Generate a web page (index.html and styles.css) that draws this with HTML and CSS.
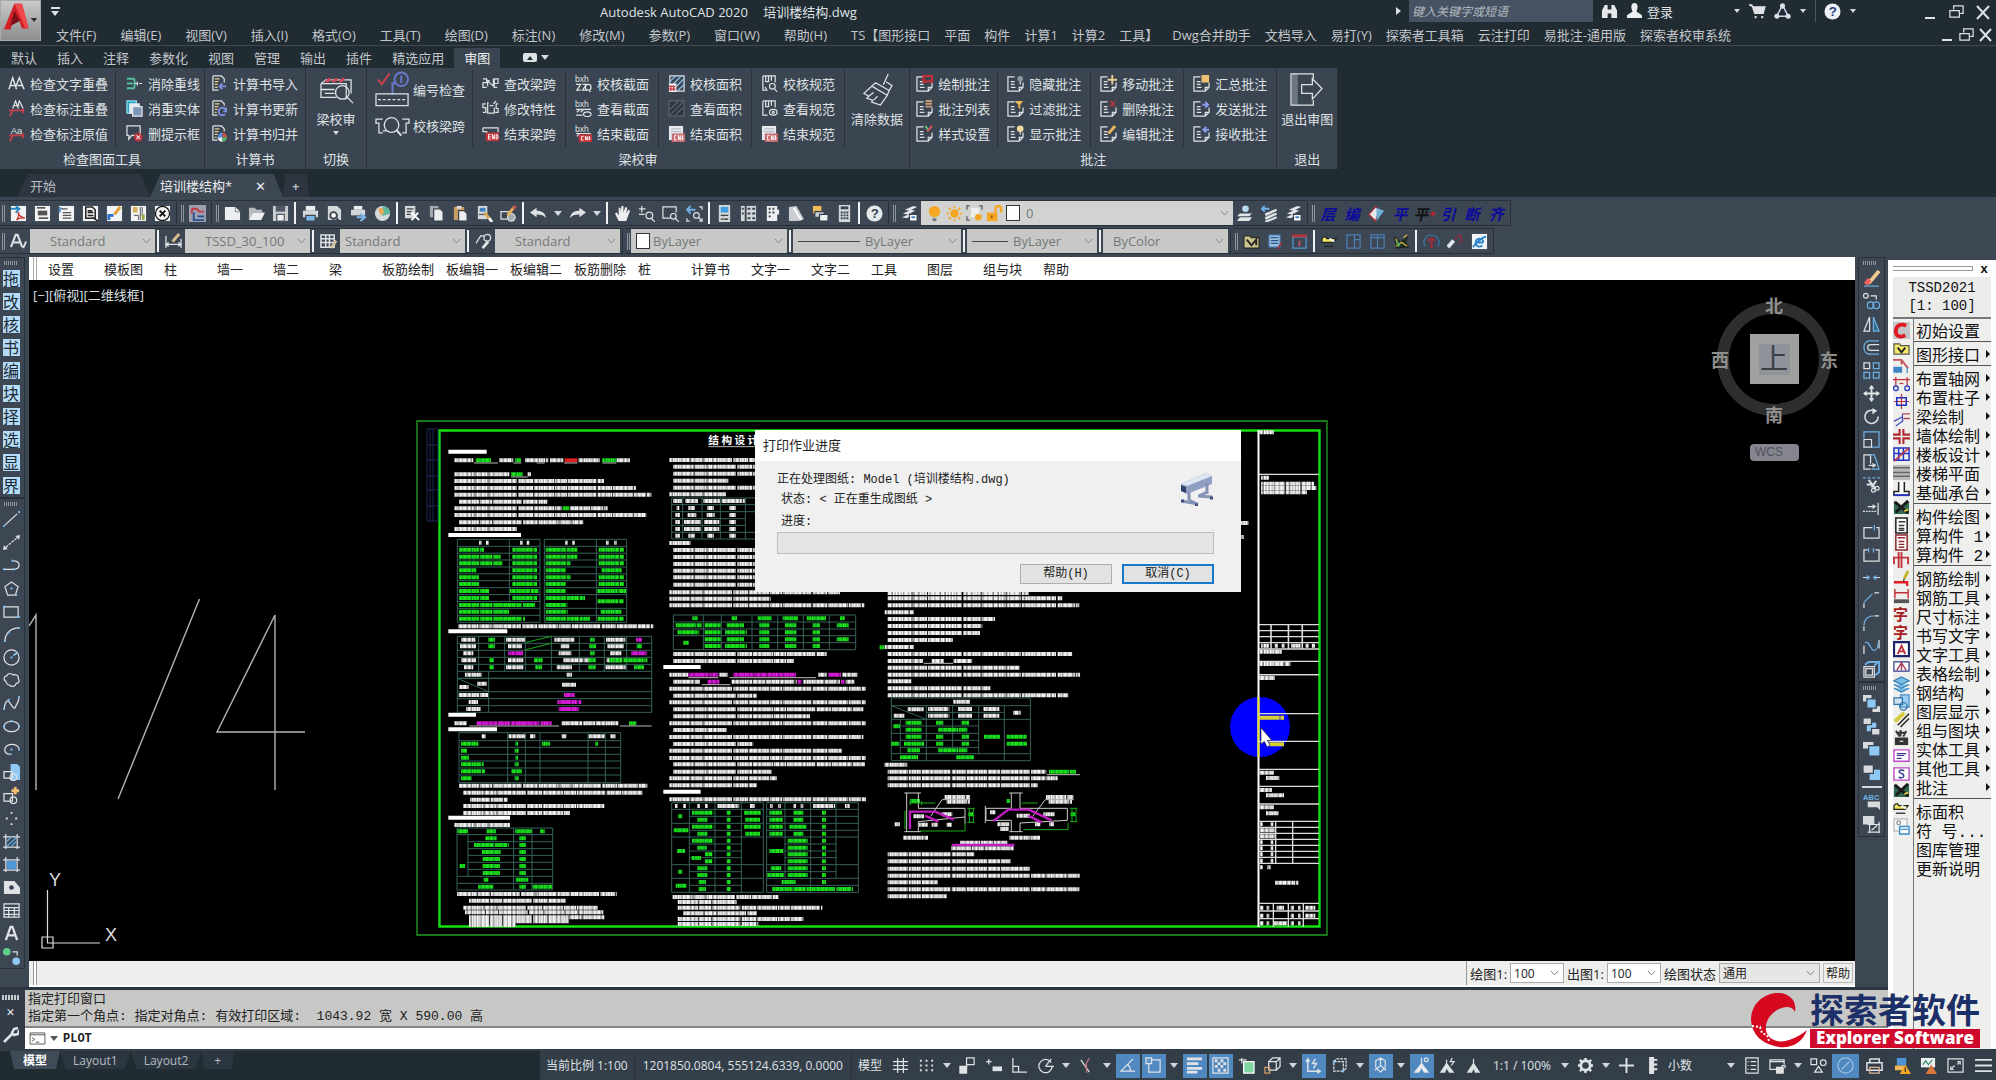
FILE: index.html
```
<!DOCTYPE html>
<html lang="zh-CN">
  <head>
    <meta charset="UTF-8" />
    <meta name="viewport" content="width=device-width, initial-scale=1.0" />
    <title>Autodesk AutoCAD 2020 培训楼结构.dwg</title>
    <link rel="stylesheet" href="styles.css">
  </head>
  <body>
    <!-- icon sprite -->
    <svg class="sprite">
      <symbol id="aa" viewBox="0 0 18 18"><path d="M1 15L5 3l4 12M3 11h5M8 13L12 3l5 12M10 11h5" stroke-width="1.6"/></symbol>
      <symbol id="aadim" viewBox="0 0 18 18"><path d="M5 9l3-8 3 8M7 6h5M10 8l2-7 4 8"/><path d="M1 11h16M2 17l3-6M16 9v5" stroke="#c0404c" stroke-width="2"/></symbol>
      <symbol id="aaval" viewBox="0 0 18 18"><text x="3" y="9" font-size="10">Aa</text><path d="M1 11h16M2 17l3-6M16 9v5" stroke="#c0404c" stroke-width="2"/></symbol>
      <symbol id="lines" viewBox="0 0 18 18"><path d="M1 4h8M1 9h6M1 14h8M9 4v10" stroke="#4fc1a0" stroke-width="2"/><path d="M9 9h3M14 9h3M12 7v4"/></symbol>
      <symbol id="solid" viewBox="0 0 18 18"><path d="M1 1h10v13H1z" fill="#2aa5c0" stroke="#8fe0ee"/><path d="M4 4h10v10H4z" fill="#e8edf2"/><path d="M7 7h10v10H7z" fill="#7f97b5" stroke="#dfe6ee"/></symbol>
      <symbol id="tip" viewBox="0 0 18 18"><path d="M1 1h14v10H6l-3 4v-4H1z"/><circle cx="13" cy="13" r="4.5" fill="#c22f37" stroke="none"/><path d="M11 11l4 4M15 11l-4 4"/></symbol>
      <symbol id="book-in" viewBox="0 0 18 18"><path d="M2 1h9l3 3v4M2 1v15h6"/><path d="M4 4h5M4 7h4M4 10h3M4 13h3" stroke="#e8d090"/><path d="M16 12h-6M12 9l-3 3 3 3" stroke="#7e8fe0" stroke-width="2"/></symbol>
      <symbol id="book-up" viewBox="0 0 18 18"><path d="M2 1h9l3 3v2M2 1v15h5"/><path d="M4 4h5M4 7h4M4 10h3M4 13h2" stroke="#e8d090"/><path d="M16 11a4 4 0 1 0-1 4M16 8v4h-3" stroke="#7e8fe0" stroke-width="2"/></symbol>
      <symbol id="book-m" viewBox="0 0 18 18"><path d="M2 1h9l3 3v3M2 1v15h5"/><path d="M4 4h5M4 7h4M4 10h3M4 13h2" stroke="#e8d090"/><g stroke="none"><path d="M12 13V8a5 5 0 0 1 5 5z" fill="#d35050"/><path d="M12 13h5a5 5 0 0 1-5 5z" fill="#52b36a"/><path d="M12 13v5a5 5 0 0 1-5-5z" fill="#e8eef5"/><path d="M12 13H7a5 5 0 0 1 5-5z" fill="#4e8fe0"/></g></symbol>
      <symbol id="beam-switch" viewBox="0 0 36 28"><path d="M2 8h26v16M2 8v14h16M2 14h14M6 18h10M2 8l5-4h26v14" /><path d="M7 6l5-3M14 6l5-3M21 6l5-3" stroke="#d04a5c" stroke-width="3"/><circle cx="24" cy="17" r="7"/><path d="M29 22l6 6"/></symbol>
      <symbol id="beam-no" viewBox="0 0 36 36"><path d="M3 8l4 5L15 2" stroke="#c8414a" stroke-width="2"/><circle cx="27" cy="8" r="7" stroke="#6878c8" stroke-width="2"/><path d="M27 4v8M18 24V12h3" stroke="#6878c8" stroke-width="2"/><path d="M1 23h33v12H1z"/><path d="M3 29h29" stroke-dasharray="3 2"/></symbol>
      <symbol id="beam-chk" viewBox="0 0 36 22"><path d="M8 4H1v4h3v10h4M28 4h7v4h-3v10h-4M8 16h4"/><circle cx="17" cy="10" r="7.500"/><path d="M22 15l5 6" stroke-width="2"/></symbol>
      <symbol id="span" viewBox="0 0 18 18"><path d="M1 4h4v4H1v5h4M16 13h-3V4h4v5h-4M6 6l6 6M6 12V6h2M12 4v8"/></symbol>
      <symbol id="span2" viewBox="0 0 18 18"><path d="M4 4H1v4h3v5H1M7 3H6v11h7V8M8 6h4M12 4l3-3M17 4h-2v5h2v4h-3"/></symbol>
      <symbol id="span-end" viewBox="0 0 18 18"><path d="M1 3h16v5M1 3v4h4v6"/><path d="M4 8h14v9H4z" fill="#c5333b" stroke="none"/><path d="M7 10v5M7 10h2M7 12.500h2M7 15h2M11 15v-5l2 5v-5M15 10v5q2 0 2-2.500t-2-2.500" stroke="#fff" stroke-width="1"/></symbol>
      <symbol id="sec" viewBox="0 0 18 18"><text x="0" y="7" font-size="9">bxh</text><path d="M1 10h5l-4 6h4M8 10h4l-4 6h5M15 17l2 1"/><circle cx="14" cy="13" r="3"/></symbol>
      <symbol id="sec-eye" viewBox="0 0 18 18"><text x="0" y="7" font-size="9">bxh</text><path d="M1 10h16M2 13l3-3M6 13l3-3M1 16h7"/><ellipse cx="13" cy="15" rx="4" ry="2.500"/></symbol>
      <symbol id="sec-end" viewBox="0 0 18 18"><text x="0" y="7" font-size="9">bxh</text><path d="M1 9h16M2 12l3-3"/><path d="M4 10h14v8H4z" fill="#c5333b" stroke="none"/><path d="M7 12v4M7 12h2M7 16h2M11 16v-4l2 4v-4M15 12v4q2-1 0-4" stroke="#fff" stroke-width="1"/></symbol>
      <symbol id="area" viewBox="0 0 18 18"><path d="M2 1h15v16H2z"/><path d="M2 7l6-6M2 13L14 1M8 13l9-9M10 17l7-7" stroke="#89c4ec"/><path d="M1 9h8v9H1z" fill="#eee" stroke="none"/><path d="M3 11v6M6 11v6M1 12h7M1 15h7" stroke="#c5333b"/></symbol>
      <symbol id="area-v" viewBox="0 0 18 18"><path d="M1 1h16v16H1z" fill="#2e3641" stroke="#5a6470"/><path d="M2 10L11 1M2 16L16 2M8 16l8-8" stroke="#5a6470"/></symbol>
      <symbol id="doc-end" viewBox="0 0 18 18"><path d="M1 1h15v15H1z" fill="#e6e9ee" stroke="none"/><path d="M3 4h11M3 7h11" stroke="#b8bec8"/><path d="M4 9h14v9H4z" fill="#c96a6f" stroke="none"/><path d="M7 11v5M7 11h2M7 16h2M11 16v-5l2 5v-5M15 11v5q2-1 0-5" stroke="#fff" stroke-width="1"/></symbol>
      <symbol id="norm" viewBox="0 0 18 18"><path d="M2 1v15h5M2 1h13v7M5 1v6h3V1M11 1v5M4 13l2 2"/><circle cx="12" cy="12" r="3"/><path d="M14 14l3 4"/></symbol>
      <symbol id="norm-eye" viewBox="0 0 18 18"><path d="M2 1v15h5M2 1h13v7M5 1v6h3V1M11 1v5"/><ellipse cx="13" cy="13" rx="4" ry="3"/><circle cx="13" cy="13" r="1"/></symbol>
      <symbol id="broom" viewBox="0 0 34 34"><path d="M28 1l-5 11M15 10l14 8M12 14l15 9M15 10L3 21l5 3-2 2 6 2-1 2 9 3 7-10 2-5M29 18l3-5-6-4M8 24l5-4M13 28l4-4"/></symbol>
      <symbol id="note" viewBox="0 0 18 18"><path d="M8 2H1v15h12l4-4V8M13 17v-4h4M4 7h4M4 10h4M4 13h5"/></symbol>
      <symbol id="n-draw" viewBox="0 0 18 18"><use href="#note"/><path d="M8 1h9v6H8z" stroke="#c22f37" stroke-width="2.500"/></symbol>
      <symbol id="n-list" viewBox="0 0 18 18"><use href="#note"/><path d="M10 1h7M10 4h7M10 7h7" stroke="#c49a76" stroke-width="2"/></symbol>
      <symbol id="n-style" viewBox="0 0 18 18"><use href="#note"/><path d="M10 1l3 4" stroke="#69c37c" stroke-width="2"/><path d="M17 1l-5 6" stroke="#e05058" stroke-width="2"/></symbol>
      <symbol id="n-hide" viewBox="0 0 18 18"><use href="#note"/><circle cx="14" cy="4" r="3" fill="#8d97a0" stroke="none"/><path d="M14 7v3"/></symbol>
      <symbol id="n-filter" viewBox="0 0 18 18"><use href="#note"/><path d="M8 1h9l-3 4v5l-2-2V5z" fill="#e9b65a" stroke="none"/></symbol>
      <symbol id="n-show" viewBox="0 0 18 18"><use href="#note"/><circle cx="14" cy="4" r="3.500" fill="#f4dba0" stroke="none"/><path d="M14 7v3"/></symbol>
      <symbol id="n-move" viewBox="0 0 18 18"><use href="#note"/><path d="M13 0v10M8 5h10" stroke="#e9cf96" stroke-width="2"/></symbol>
      <symbol id="n-del" viewBox="0 0 18 18"><use href="#note"/><path d="M11 1l5 6M16 1l-5 6" stroke="#c22f37" stroke-width="1.600"/></symbol>
      <symbol id="n-edit" viewBox="0 0 18 18"><use href="#note"/><path d="M16 1l-7 8" stroke="#e9b65a" stroke-width="3"/></symbol>
      <symbol id="n-sum" viewBox="0 0 18 18"><use href="#note"/><path d="M9 0h8v8H9z" fill="#ecc070" stroke="none"/></symbol>
      <symbol id="n-send" viewBox="0 0 18 18"><use href="#note"/><path d="M10 5h6M13 2l3 3-3 3" stroke="#8a9cf0" stroke-width="2"/></symbol>
      <symbol id="n-recv" viewBox="0 0 18 18"><use href="#note"/><path d="M17 5h-6M14 2l-3 3 3 3" stroke="#8a9cf0" stroke-width="2"/></symbol>
      <symbol id="exit" viewBox="0 0 36 34"><path d="M2 1h6v32H2z" fill="#6b7685" stroke="none"/><path d="M24 6V1H1v32h23v-5M12 12h11V6l10 10-10 11v-6H12z"/></symbol>

      <symbol id="sheet" viewBox="0 0 18 18"><path d="M1 1h16v16H1z" fill="#f2f3f4" stroke="none"/></symbol>
      <symbol id="pdf" viewBox="0 0 18 18"><use href="#sheet"/><path d="M1 4h8M6 1l4 3-4 4" stroke="#2a86c4" stroke-width="2"/><path d="M7 16c2-3 3-7 2-8s-1 4 7 6c-4-1-7 0-9 2" stroke="#d03030"/></symbol>
      <symbol id="plot1" viewBox="0 0 18 18"><use href="#sheet"/><path d="M3 3h9M5 14h10" stroke="#222"/><path d="M4 6h10v5H4z" fill="#555" stroke="none"/></symbol>
      <symbol id="plot2" viewBox="0 0 18 18"><use href="#sheet"/><path d="M3 4h7M5 8h9M5 11h9M5 14h9" stroke="#555"/><path d="M2 2v6" stroke="#4d93d0" stroke-width="2"/></symbol>
      <symbol id="plot3" viewBox="0 0 18 18"><use href="#sheet"/><path d="M4 2h7l3 3v9H4zM6 6h5M6 8h6M6 11h6M11 13l6 4" stroke="#222" stroke-width="1.600"/></symbol>
      <symbol id="plot4" viewBox="0 0 18 18"><use href="#sheet"/><path d="M3 16v-5h5" stroke="#2a6fc4" stroke-width="3"/><path d="M15 2L9 10" stroke="#e0a030" stroke-width="3"/></symbol>
      <symbol id="plot5" viewBox="0 0 18 18"><use href="#sheet"/><path d="M3 2h5v6H3z" fill="#d9b35a" stroke="none"/><path d="M11 2v14M13 2v10M4 11h5v5" stroke="#777"/><path d="M14 10v6" stroke="#9a4" stroke-width="3"/></symbol>
      <symbol id="xcirc" viewBox="0 0 18 18"><use href="#sheet"/><circle cx="9" cy="9" r="7.500" stroke="#111"/><path d="M6 6l6 6M12 6l-6 6" stroke="#111" stroke-width="2"/></symbol>
      <symbol id="tree" viewBox="0 0 18 18"><path d="M0 0h18v18H0z" fill="#9d9fae" stroke="none"/><path d="M3 4h5l3 3h5M3 4v5" stroke="#c63540" stroke-width="2"/><path d="M5 8v8h4M9 12h7M9 16h7" stroke="#23528f" stroke-width="2"/></symbol>
      <symbol id="new" viewBox="0 0 18 18"><path d="M1 2h11l5 5v9H1z" fill="#eceeef" stroke="none"/><path d="M12 2v5h5" stroke="#999"/></symbol>
      <symbol id="open" viewBox="0 0 18 18"><path d="M1 16V3h6l2 2h6v3H5z" fill="#b7bcc0" stroke="none"/><path d="M5 8h13l-4 8H1z" fill="#eceeef" stroke="none"/></symbol>
      <symbol id="save" viewBox="0 0 18 18"><path d="M1 1h16v16H1z" fill="#c9cdd1" stroke="none"/><path d="M4 1h10v6H4z" fill="#50596a" stroke="none"/><path d="M5 10h8v7H5z" fill="#eee" stroke="#50596a"/></symbol>
      <symbol id="print" viewBox="0 0 18 18"><path d="M4 1h10v5H4z" fill="#eceeef" stroke="none"/><path d="M1 6h16v7H1z" fill="#d4d7da" stroke="none"/><path d="M4 11h10v6H4z" fill="#7bb8e8" stroke="#39434f"/></symbol>
      <symbol id="preview" viewBox="0 0 18 18"><path d="M2 1h10l4 4v11H2z" fill="#d4d7da" stroke="none"/><circle cx="8" cy="11" r="3.500" stroke="#39434f" stroke-width="2" fill="#fff"/><path d="M11 14l4 4" stroke="#39434f" stroke-width="2"/></symbol>
      <symbol id="publish" viewBox="0 0 18 18"><path d="M4 1h9v4H4z" fill="#eceeef" stroke="none"/><path d="M1 5h15v6H1z" fill="#d4d7da" stroke="none"/><path d="M7 13h7M11 9l5 4-5 4" stroke="#7bb8e8" stroke-width="2"/></symbol>
      <symbol id="globe" viewBox="0 0 18 18"><circle cx="9" cy="9" r="8" fill="#d6d9dc" stroke="none"/><path d="M9 1a8 8 0 0 1 8 8l-8 3z" fill="#5fb89b" stroke="none"/><path d="M4 4l5-1 2 5-4 3z" fill="#e8a95c" stroke="none"/></symbol>
      <symbol id="cut" viewBox="0 0 18 18"><path d="M1 1h11v13H1z" fill="#d4d7da" stroke="none"/><path d="M3 4h7M3 7h5M3 10h4" stroke="#444"/><path d="M8 8l8 8M15 8l-7 8" stroke="#fff" stroke-width="2"/></symbol>
      <symbol id="copyd" viewBox="0 0 18 18"><path d="M2 1h9v12H2z" fill="#a5abb1" stroke="none"/><path d="M6 4h7l3 3v10H6z" fill="#eceeef" stroke="#39434f"/></symbol>
      <symbol id="paste" viewBox="0 0 18 18"><path d="M2 2h11v14H2z" fill="#c89b5e" stroke="none"/><path d="M5 1h5v3H5z" fill="#ddd" stroke="none"/><path d="M7 6h6l3 3v8H7z" fill="#eceeef" stroke="#39434f"/></symbol>
      <symbol id="match" viewBox="0 0 18 18"><path d="M2 1h10v14H2z" fill="#d4d7da" stroke="none"/><path d="M4 3h6v4H4z" fill="#3f7fc0" stroke="none"/><path d="M3 10h8" stroke="#555"/><path d="M9 8l5 6" stroke="#d9a95a" stroke-width="3"/><path d="M14 14l3 4" stroke="#fff" stroke-width="3"/></symbol>
      <symbol id="bedit" viewBox="0 0 18 18"><path d="M1 7h9v8H1z"/><circle cx="12" cy="13" r="4" fill="#a5abb1"/><path d="M15 2L8 11" stroke="#e2b05a" stroke-width="3"/><path d="M17 1l-3 3" stroke="#c2504f" stroke-width="3"/></symbol>
      <symbol id="undo" viewBox="0 0 18 18"><path d="M0 8l7-5v3c6 0 9 2 10 8-2-3-5-4-10-4v3z" fill="#dfe2e5" stroke="none"/></symbol>
      <symbol id="redo" viewBox="0 0 18 18"><path d="M18 8l-7-5v3C5 6 2 8 1 14c2-3 5-4 10-4v3z" fill="#dfe2e5" stroke="none"/></symbol>
      <symbol id="hand" viewBox="0 0 18 18"><path d="M5 17L1 9l2-1 2 3V3h2v5l1-7h2v7l2-6 2 1-1 6 2-4 2 1-3 8-1 3z" fill="#eceeef" stroke="none"/></symbol>
      <symbol id="zpm" viewBox="0 0 18 18"><path d="M1 4h7M4 1v7M1 10h6"/><circle cx="12" cy="11" r="3.500"/><path d="M14 14l4 4"/></symbol>
      <symbol id="zwin" viewBox="0 0 18 18"><path d="M9 14H1V2h14v6"/><circle cx="12" cy="12" r="3"/><path d="M14 14l4 4"/></symbol>
      <symbol id="zprev" viewBox="0 0 18 18"><path d="M1 14v3h3M14 17h3v-3M17 5V2h-3"/><path d="M1 5h9M5 1L1 5l4 4" stroke="#6db1e6" stroke-width="2"/><circle cx="11" cy="11" r="3"/><path d="M13 13l4 4"/></symbol>
      <symbol id="props" viewBox="0 0 18 18"><path d="M3 0h12v18H3z" fill="#d4d7da" stroke="none"/><path d="M5 2h8v6H5z" fill="#3f9fe0" stroke="none"/><path d="M5 11h8M5 15h8M8 10v2M11 14v2" stroke="#444"/></symbol>
      <symbol id="dcenter" viewBox="0 0 18 18"><path d="M1 1h16v16H1z" fill="#d4d7da" stroke="none"/><path d="M6 1v16M8 4h3M13 4h3M8 9h3M13 9h3M8 14h3M13 14h3M2 4h2M2 9h2" stroke="#39434f" stroke-width="2"/></symbol>
      <symbol id="tpal" viewBox="0 0 18 18"><path d="M3 1h11v4h2v5h-2v7H3z" fill="#eceeef" stroke="none"/><path d="M5 4h2M9 4h2M5 8h2M9 8h2M5 12h2" stroke="#39434f" stroke-width="2"/></symbol>
      <symbol id="sset" viewBox="0 0 18 18"><path d="M1 2l8-1 8 14-6 2H1z" fill="#c9cdd1" stroke="none"/><path d="M6 3l8 13" stroke="#fff" stroke-width="2"/></symbol>
      <symbol id="markup" viewBox="0 0 18 18"><path d="M1 1h9v8H1z" fill="#f0b95a" stroke="none"/><path d="M3 7h10v6H3z" fill="#cfd3d7" stroke="#39434f"/><path d="M8 10h9v7H8z" fill="#eceeef" stroke="#39434f"/></symbol>
      <symbol id="calc" viewBox="0 0 18 18"><path d="M3 0h12v18H3z" fill="#d4d7da" stroke="none"/><path d="M5 3h8" stroke="#39434f" stroke-width="3"/><path d="M5 8h8M5 11h8M5 14h8" stroke="#39434f" stroke-width="2" stroke-dasharray="2 1"/></symbol>
      <symbol id="help" viewBox="0 0 18 18"><circle cx="9" cy="9" r="8.500" fill="#e6e9eb" stroke="none"/><text x="5" y="14" font-size="14" font-weight="700" class="dark">?</text></symbol>
      <symbol id="layers" viewBox="0 0 18 18"><path d="M4 5l9-4 4 1-8 4zM2 9l9-4 4 1-8 4zM1 13l9-4 4 1-8 4z" fill="#e3e6e8" stroke="none"/><path d="M9 10h8v7H9z" fill="#fff" stroke="#39434f"/><path d="M11 13h4" stroke="#3f7fc0" stroke-width="2"/></symbol>
      <symbol id="lay-cur" viewBox="0 0 18 18"><circle cx="9" cy="4" r="3.500" fill="#b9d9ef" stroke="none"/><path d="M3 9h13l-3 3H0zM3 13h13l-3 4H0z" fill="#dfe3e6" stroke="none"/></symbol>
      <symbol id="lay-prev" viewBox="0 0 18 18"><path d="M4 9l12-5 1 2-12 6zM4 13l12-5 1 2-12 6zM4 17l12-5 1 2-12 5z" fill="#dfe3e6" stroke="none"/><path d="M1 4h8M4 1L1 4l3 3" stroke="#6db1e6" stroke-width="2"/></symbol>
      <symbol id="bulb" viewBox="0 0 18 18"><circle cx="9" cy="7" r="6" fill="#f5a623" stroke="none"/><path d="M7 14h4v3H7z" fill="#777" stroke="none"/></symbol>
      <symbol id="sun" viewBox="0 0 18 18"><circle cx="9" cy="9" r="4.500" fill="#f5a623" stroke="none"/><path d="M9 1v2M9 15v2M1 9h2M15 9h2M3 3l2 2M13 13l2 2M15 3l-2 2M3 15l2-2" stroke="#f5a623" stroke-width="2"/></symbol>
      <symbol id="vpf" viewBox="0 0 18 18"><path d="M5 3h9v10H5z" fill="#eee" stroke="none"/><path d="M1 5V1h3M14 1h3v4M1 12v4h3" stroke="#555"/><circle cx="13" cy="13" r="3.500" fill="#f5a623" stroke="none"/></symbol>
      <symbol id="unlock" viewBox="0 0 18 18"><path d="M1 8h11v9H1z" fill="#f5a623" stroke="none"/><path d="M10 8V4a3 3 0 0 1 6 0v4" stroke="#f5a623" stroke-width="2.500"/><path d="M6 11v3" stroke="#a06000" stroke-width="2"/></symbol>
      <symbol id="fan" viewBox="0 0 18 18"><path d="M1 10l7-8 4 3-4 12z" fill="#e6e8ea" stroke="#a33"/><path d="M9 3l8 3-8 11z" fill="#6fb1d8" stroke="none"/></symbol>
      <symbol id="astyle" viewBox="0 0 18 18"><path d="M1 15L6 2h2l5 13M4 10h7" stroke-width="2.200"/><path d="M17 9l-3 7" stroke-width="2"/></symbol>
      <symbol id="dimst" viewBox="0 0 18 18"><path d="M1 3v13M17 6v10M1 12h16M4 10l-3 2 3 2M14 10l3 2-3 2"/><path d="M15 1L8 9" stroke="#d9bd8c" stroke-width="3"/></symbol>
      <symbol id="tblst" viewBox="0 0 18 18"><path d="M1 2h14v13H1zM1 6h14M1 10h14M6 2v13M10 2v13" stroke-width="1.600"/><path d="M17 8l-5 8" stroke="#cfc0a0" stroke-width="3"/></symbol>
      <symbol id="mlst" viewBox="0 0 18 18"><path d="M1 11L6 3h4"/><circle cx="13" cy="5" r="3.500"/><path d="M14 9l-6 7" stroke-width="3"/></symbol>
      <symbol id="cadfold" viewBox="0 0 18 18"><path d="M1 3h6l2 2h8v11H1z" fill="#c9c48d" stroke="#2b2b20"/><path d="M4 7l5 6 5-6v6" stroke="#222" stroke-width="2"/></symbol>
      <symbol id="gridr" viewBox="0 0 18 18"><path d="M2 2h12v13H2z" fill="#9cc0dc" stroke="#3a6ea5"/><path d="M4 5h8M4 8h8M4 11h8" stroke="#2a5a8c"/><path d="M16 10l-5 7" stroke="#8d3340" stroke-width="2"/></symbol>
      <symbol id="cal" viewBox="0 0 18 18"><path d="M2 4h14v12H2z" stroke="#4c9cd0"/><path d="M1 3h16" stroke="#b8343c" stroke-width="3"/><path d="M9 8v6" stroke="#c0525a" stroke-width="2"/></symbol>
      <symbol id="yfold" viewBox="0 0 18 18"><path d="M1 10h12l3-4H6L5 4H3L1 6z" fill="#f0e860" stroke="#222"/><path d="M3 14h10" stroke="#222"/><path d="M9 6l5 3" stroke="#fff" stroke-width="2"/></symbol>
      <symbol id="bpan" viewBox="0 0 18 18"><path d="M2 2h14v14H2zM10 2v14M10 7h6" stroke="#4a7fb4"/></symbol>
      <symbol id="bpan2" viewBox="0 0 18 18"><path d="M2 2h14v14H2zM9 2v14M2 5h14" stroke="#4a7fb4"/></symbol>
      <symbol id="cadg" viewBox="0 0 18 18"><path d="M1 3l7 6 9-7-3 7 3 7H9l-6 1z" fill="#1f2b22" stroke="none"/><path d="M3 14l6-4 6 4M11 5l4-3M3 6l3 8" stroke="#cda93c" stroke-width="1.500"/><path d="M4 9l3 5" stroke="#3fae6a" stroke-width="2"/></symbol>
      <symbol id="mag" viewBox="0 0 18 18"><path d="M2 14a8 8 0 1 1 14 0" stroke="#3a77a8"/><path d="M9 16V8M6 9a3 3 0 0 1 6 0" stroke="#9c2d3d" stroke-width="2.500"/></symbol>
      <symbol id="torch" viewBox="0 0 18 18"><path d="M1 15l6-7" stroke="#dde6ee" stroke-width="4"/><path d="M8 7l6-5 2 6-4 4" stroke="#7c3544" stroke-width="2"/></symbol>
      <symbol id="ie" viewBox="0 0 18 18"><use href="#sheet"/><path d="M13 10H5a4 4 0 0 1 8 0M5 10a4 4 0 0 0 7 3M2 15C5 11 12 4 16 4" stroke="#2e86cf" stroke-width="2"/></symbol>

      <!-- draw -->
      <symbol id="d-line" viewBox="0 0 18 18"><path d="M2 15L15 3"/><path d="M0 16h2M16 1h2" stroke="#7cc0f0" stroke-width="2"/></symbol>
      <symbol id="d-xline" viewBox="0 0 18 18"><path d="M3 14L15 4" stroke-dasharray="3 1"/><path d="M0 17l1-5 4 4zM18 1l-5 1 4 4z" fill="#dfe2e5" stroke="none"/></symbol>
      <symbol id="d-pl" viewBox="0 0 18 18"><path d="M1 13h10c8 0 8-9 0-9"/><path d="M0 13h2M9 4h2M10 13h2" stroke="#7cc0f0" stroke-width="2"/></symbol>
      <symbol id="d-poly" viewBox="0 0 18 18"><path d="M9 2l7 5-3 9H5L2 7z"/><path d="M8 9h2M13 16h2" stroke="#7cc0f0" stroke-width="2"/></symbol>
      <symbol id="d-rect" viewBox="0 0 18 18"><path d="M1 4h15v11H1z"/><path d="M0 4h2M15 15h3" stroke="#7cc0f0" stroke-width="2"/></symbol>
      <symbol id="d-arc" viewBox="0 0 18 18"><path d="M2 17C2 8 8 2 17 2"/><path d="M1 16h2M5 7h2M16 2h2" stroke="#7cc0f0" stroke-width="2"/></symbol>
      <symbol id="d-circ" viewBox="0 0 18 18"><circle cx="9" cy="9" r="8"/><path d="M8 9h2M11 7l4-3" stroke="#7cc0f0" stroke-width="2"/></symbol>
      <symbol id="d-cloud" viewBox="0 0 18 18"><path d="M3 10C0 8 1 4 4 4c1-3 5-3 6-1 4-1 7 1 6 4 2 2 1 5-2 5-1 4-5 4-7 2-3 0-3-2-4-4z"/></symbol>
      <symbol id="d-spl" viewBox="0 0 18 18"><path d="M1 15c2-10 4-10 6-7s5 8 6 5 3-4 4-10"/><path d="M0 15h2M5 5h2M16 2h2" stroke="#7cc0f0" stroke-width="2"/></symbol>
      <symbol id="d-ell" viewBox="0 0 18 18"><ellipse cx="9" cy="9" rx="8" ry="5.500"/><path d="M0 9h2M8 3h2M16 9h2" stroke="#7cc0f0" stroke-width="2"/></symbol>
      <symbol id="d-ella" viewBox="0 0 18 18"><path d="M17 8C15 2 4 2 2 8c-1 4 2 6 5 6"/><path d="M8 9h2M16 9h2M7 14h2" stroke="#7cc0f0" stroke-width="2"/></symbol>
      <symbol id="d-ins" viewBox="0 0 18 18"><path d="M8 0h7l3 3v14H8z" fill="#8fc8f2" stroke="none"/><path d="M1 8h9v7H1z"/><circle cx="11" cy="14" r="3.500"/></symbol>
      <symbol id="d-blk" viewBox="0 0 18 18"><path d="M1 7h9v8H1z"/><circle cx="11" cy="14" r="3.500"/><path d="M13 0v8M9 4h8" stroke="#f0c070" stroke-width="3"/></symbol>
      <symbol id="d-pt" viewBox="0 0 18 18"><path d="M8 3h2M3 9h2M13 9h2M8 15h2" stroke-width="2"/></symbol>
      <symbol id="d-hat" viewBox="0 0 18 18"><path d="M3 1v16M15 1v16M0 4h18M0 15h18"/><path d="M4 9l5-5M4 14L14 5M9 14l5-5" stroke="#5fa8e0" stroke-width="1.500"/></symbol>
      <symbol id="d-grad" viewBox="0 0 18 18"><path d="M4 5h10v9H4z" fill="#4f98d8" stroke="none"/><path d="M3 1v16M15 1v16M0 4h18M0 15h18"/></symbol>
      <symbol id="d-reg" viewBox="0 0 18 18"><path d="M1 2h11l6 7v7H1z" fill="#dfe2e5" stroke="none"/><circle cx="9" cy="9" r="2.500" fill="#39434f" stroke="none"/></symbol>
      <symbol id="d-tab" viewBox="0 0 18 18"><path d="M1 2h16v14H1zM1 6h16M1 9h16M1 13h16M6 6v10M12 6v10"/></symbol>
      <symbol id="d-a" viewBox="0 0 18 18"><path d="M3 16L8 2h2l5 14M5 11h8" stroke-width="2.400"/></symbol>
      <symbol id="d-sel" viewBox="0 0 18 18"><circle cx="4" cy="4" r="4" fill="#5ed08a" stroke="none"/><circle cx="14" cy="14" r="4" fill="#8fc8f2" stroke="none"/><path d="M10 4h5v4"/></symbol>
      <!-- modify -->
      <symbol id="m-erase" viewBox="0 0 18 18"><path d="M17 1L6 14" stroke="#ecc98c" stroke-width="4"/><path d="M7 10l-4 5" stroke="#f0645c" stroke-width="5"/><path d="M1 17h16" stroke="#6db1e6"/></symbol>
      <symbol id="m-copy" viewBox="0 0 18 18"><circle cx="3" cy="3" r="2.500"/><path d="M8 3h6v4"/><circle cx="8" cy="13" r="3.500" stroke="#6db1e6"/><circle cx="14" cy="13" r="3.500" stroke="#6db1e6"/></symbol>
      <symbol id="m-mir" viewBox="0 0 18 18"><path d="M7 1v15H1z"/><path d="M11 1v15h6z" stroke="#6db1e6" fill="#3b6a90"/></symbol>
      <symbol id="m-off" viewBox="0 0 18 18"><path d="M17 2H7c-8 0-8 14 0 14h10" stroke="#6db1e6"/><path d="M17 6H8c-4 0-4 6 0 6h9"/></symbol>
      <symbol id="m-arr" viewBox="0 0 18 18"><path d="M1 1h6v6H1z"/><path d="M11 1h6v6h-6zM1 11h6v6H1zM11 11h6v6h-6z" stroke="#6db1e6"/></symbol>
      <symbol id="m-mov" viewBox="0 0 18 18"><path d="M9 1v16M1 9h16" stroke-width="2"/><path d="M9 0l3 4H6zM9 18l3-4H6zM0 9l4-3v6zM18 9l-4-3v6z" fill="#dfe2e5" stroke="none"/></symbol>
      <symbol id="m-rot" viewBox="0 0 18 18"><path d="M12 3A7 7 0 1 0 16 9" stroke-width="1.600"/><path d="M10 0l5 3-5 4z" fill="#dfe2e5" stroke="none"/></symbol>
      <symbol id="m-sca" viewBox="0 0 18 18"><path d="M1 8V1h16v16H9" stroke="#6db1e6"/><path d="M1 9h8v8H1z"/></symbol>
      <symbol id="m-str" viewBox="0 0 18 18"><path d="M8 16H1V1h7v9"/><path d="M8 1h4l5 15H9" stroke="#6db1e6"/><path d="M6 12h6M10 10l3 2-3 2"/></symbol>
      <symbol id="m-trim" viewBox="0 0 18 18"><path d="M0 1h18" stroke="#6db1e6" stroke-dasharray="3 2"/><path d="M6 3l7 9M14 4l-5 7M4 8h6" stroke-width="2"/><circle cx="11" cy="14" r="2"/><circle cx="15" cy="12" r="2"/></symbol>
      <symbol id="m-ext" viewBox="0 0 18 18"><path d="M16 3v13M5 7h8M10 5l3 2-3 2"/><path d="M0 12h14" stroke-dasharray="2 1"/></symbol>
      <symbol id="m-brk" viewBox="0 0 18 18"><path d="M10 5H1v11h16V5h-3"/><path d="M12 2v6" stroke="#6db1e6"/></symbol>
      <symbol id="m-brk2" viewBox="0 0 18 18"><path d="M5 4H1v12h16V4h-4"/><path d="M6 2v5M11 2v5" stroke="#6db1e6"/></symbol>
      <symbol id="m-join" viewBox="0 0 18 18"><path d="M0 9h5M13 9h5"/><path d="M4 6l4 3-4 3zM14 6l-4 3 4 3z" fill="#6db1e6" stroke="none"/></symbol>
      <symbol id="m-cha" viewBox="0 0 18 18"><path d="M1 17v-5M12 1h5"/><path d="M1 11L10 2" stroke="#6db1e6"/></symbol>
      <symbol id="m-fil" viewBox="0 0 18 18"><path d="M1 17v-5M12 1h5"/><path d="M1 11C1 5 5 1 11 1" stroke="#6db1e6"/></symbol>
      <symbol id="m-ble" viewBox="0 0 18 18"><path d="M1 17V8M17 11V2"/><path d="M2 5c5-3 6 9 10 8 3 0 4-5 4-8" stroke="#6db1e6"/></symbol>
      <symbol id="m-exp" viewBox="0 0 18 18"><path d="M1 6h11v11H1z" /><path d="M3 8h7v7H3z"/><path d="M2 4l4-3h11v11l-4 3M12 5l4-4" stroke="#6db1e6" stroke-width="2"/></symbol>
      <symbol id="o-1" viewBox="0 0 18 18"><path d="M0 0h9v7H0zM10 12h8v6h-8z" fill="#d8dbde" stroke="none"/><path d="M4 4h10v10H4z" fill="#8fc8f2" stroke="#39434f"/></symbol>
      <symbol id="o-2" viewBox="0 0 18 18"><path d="M4 5h10v9H4z" fill="#8fc8f2" stroke="none"/><path d="M0 0h9v7H0zM9 11h9v7H9z" fill="#d8dbde" stroke="#39434f"/></symbol>
      <symbol id="o-3" viewBox="0 0 18 18"><path d="M0 1h11v7H0z" fill="#d8dbde" stroke="none"/><path d="M6 5h12v11H6z" fill="#8fc8f2" stroke="#39434f"/></symbol>
      <symbol id="o-4" viewBox="0 0 18 18"><path d="M7 6h11v11H7z" fill="#8fc8f2" stroke="none"/><path d="M0 1h11v9H0z" fill="#d8dbde" stroke="#39434f"/></symbol>
      <symbol id="o-5" viewBox="0 0 18 18"><text x="0" y="7" font-size="8" font-weight="700" class="blue">ABC</text><path d="M5 9h13v9l-3-3H5z" fill="#d8dbde" stroke="none"/></symbol>
      <symbol id="o-6" viewBox="0 0 18 18"><path d="M0 0h12v9H0z" fill="#d8dbde" stroke="none"/><path d="M7 7v11M17 6v12M5 9h13M5 17h13M9 15l6-5"/></symbol>

      <!-- TSSD palette -->
      <symbol id="t1" viewBox="0 0 18 18"><path d="M0 0h18v18H0z" fill="#c4c5c8" stroke="none"/><path d="M14 4C8 1 3 4 3 10c0 5 5 7 10 4" stroke="#e01b24" stroke-width="4"/></symbol>
      <symbol id="t2" viewBox="0 0 18 18"><path d="M1 4h6l1 2h9v9H1z" fill="#f5e96b" stroke="#555"/><path d="M5 8l4 5 4-5" stroke="#222" stroke-width="2"/></symbol>
      <symbol id="t3" viewBox="0 0 18 18"><path d="M0 3h9l7 9M9 3v5" stroke="#c6525c" stroke-width="2"/><path d="M1 11h8v5H1zM15 11v6" fill="#3f86c4" stroke="#3f86c4"/></symbol>
      <symbol id="t4" viewBox="0 0 18 18"><path d="M3 2v10M15 2v10M0 5h18" stroke="#c03038"/><path d="M7 9h4" stroke="#c03038"/><circle cx="3" cy="14" r="2.500" stroke="#2030c0"/><circle cx="15" cy="14" r="2.500" stroke="#2030c0"/></symbol>
      <symbol id="t5" viewBox="0 0 18 18"><path d="M9 1v16M1 9h16" stroke="#c03038"/><path d="M4 5h10v8H4z" stroke="#2030c0" stroke-width="1.600"/></symbol>
      <symbol id="t6" viewBox="0 0 18 18"><path d="M1 11l9-5M3 16l8-6M10 3v9" stroke="#4450c0"/><path d="M10 3h8M11 8h7" stroke="#b04850" stroke-width="1.500"/></symbol>
      <symbol id="t7" viewBox="0 0 18 18"><path d="M7 1v6H0M11 1v6h7M7 17v-6H0M11 17v-6h7" stroke="#b02830" stroke-width="2.200"/></symbol>
      <symbol id="t8" viewBox="0 0 18 18"><path d="M1 2h16v13H1zM6 2v13M11 2v13M1 8h16" stroke="#2434c4" stroke-width="1.600"/><path d="M1 16L17 2" stroke="#c03038" stroke-width="1.500"/></symbol>
      <symbol id="t9" viewBox="0 0 18 18"><path d="M0 1h18v16H0z" fill="#b9bbba" stroke="none"/><path d="M0 4h18M0 9h18M0 13h18" stroke="#666" stroke-width="1.500"/></symbol>
      <symbol id="t10" viewBox="0 0 18 18"><path d="M6 1v10H1v4h16v-4h-5V1" fill="#fff" stroke="#222" stroke-width="1.600"/><path d="M1 15h16" stroke="#2434c4" stroke-width="2"/></symbol>
      <symbol id="t11" viewBox="0 0 18 18"><path d="M1 2v14h16V2L9 9z" fill="#2f6a4e" stroke="none"/><path d="M2 3l14 12M16 2L3 14" stroke="#1a1a1a" stroke-width="3"/><path d="M12 13l4-2" stroke="#e2d040" stroke-width="2"/></symbol>
      <symbol id="t12" viewBox="0 0 18 18"><path d="M3 1h12v16H3z" fill="#fff" stroke="#222" stroke-width="1.600"/><path d="M6 5h7M6 9h6M6 12h6M6 14h6" stroke="#333" stroke-width="1.500"/></symbol>
      <symbol id="t13" viewBox="0 0 18 18"><path d="M3 1h12v16H3z" fill="#fff" stroke="#8e2a30" stroke-width="1.600"/><path d="M5 4h8M6 8h6M6 11h6M6 14h6" stroke="#8e2a30" stroke-width="1.500"/></symbol>
      <symbol id="t14" viewBox="0 0 18 18"><path d="M1 13V6h15v7M6 0v17M9 0v17" stroke="#c4363e" stroke-width="2"/></symbol>
      <symbol id="t15" viewBox="0 0 18 18"><path d="M1 13h14v4" stroke="#e01b24" stroke-width="2.500"/><path d="M16 1l-4 8" stroke="#c9b427" stroke-width="3"/><path d="M12 9l-1 3" stroke="#333"/></symbol>
      <symbol id="t16" viewBox="0 0 18 18"><path d="M2 1v10M16 1v10M2 5h14" stroke="#c03038" stroke-width="1.500"/><path d="M1 14h16" stroke="#555" stroke-width="4"/></symbol>
      <symbol id="t19" viewBox="0 0 18 18"><path d="M1 1h16v15H1z" fill="#fff" stroke="#1c2468" stroke-width="2.500"/><path d="M5 14l4-9 4 9M7 11h4" stroke="#c03038" stroke-width="2"/></symbol>
      <symbol id="t20" viewBox="0 0 18 18"><path d="M1 4h16v10H1z" fill="#fff" stroke="#333a8c"/><path d="M4 13l5-8 5 8M9 4v9" stroke="#a83a55" stroke-width="1.500"/></symbol>
      <symbol id="t21" viewBox="0 0 18 18"><path d="M9 1l8 4-8 4-8-4zM1 9l8 4 8-4M1 13l8 4 8-4" fill="#7dbde6" stroke="#2f7fb8"/></symbol>
      <symbol id="t22" viewBox="0 0 18 18"><path d="M8 1h9v13H8z" fill="#9ed0f2" stroke="#4a8fc4"/><path d="M1 4h9v7H1z" fill="#cfe4f4" stroke="#2f6fa8"/><circle cx="11" cy="13" r="4" stroke="#2f6fa8"/></symbol>
      <symbol id="t23" viewBox="0 0 18 18"><path d="M2 11L12 2" stroke="#d8c93a" stroke-width="4"/><path d="M5 15L17 3M8 17l9-9" stroke="#222" stroke-width="1.500"/></symbol>
      <symbol id="t24" viewBox="0 0 18 18"><path d="M2 9h14v8H2z" fill="#333" stroke="none"/><path d="M3 2l4 6M8 1v7M14 2l-3 6M5 4h9" stroke="#333" stroke-width="2"/><path d="M7 13h4" stroke="#ddd"/></symbol>
      <symbol id="t25" viewBox="0 0 18 18"><path d="M1 3h16v12H1z" fill="#fff" stroke="#c04cc8" stroke-width="1.500"/><path d="M4 7h10M4 9h8M4 12h5" stroke="#333a8c"/></symbol>
      <symbol id="t26" viewBox="0 0 18 18"><path d="M1 3h16v13H1z" fill="#fff" stroke="#c04cc8" stroke-width="1.500"/><path d="M12 6c-6-2-7 2-3 3s3 6-3 4" stroke="#333a8c" stroke-width="1.600"/></symbol>
      <symbol id="t29" viewBox="0 0 18 18"><path d="M1 1h14v13H1z" fill="#f4f5f6" stroke="#bbb"/><circle cx="6" cy="5" r="2" stroke="#999"/><path d="M7 9h10v8H7z" fill="#fff" stroke="#3b8fc8" stroke-width="1.500"/><path d="M8 12h8" stroke="#3b8fc8"/></symbol>

      <!-- status bar -->
      <symbol id="s-grid" viewBox="0 0 18 18"><path d="M6 1v16M12 1v16M1 5h16M1 9h16M1 13h16"/></symbol>
      <symbol id="s-snap" viewBox="0 0 18 18"><path d="M2 4h14M2 9h14M2 14h14" stroke-width="2" stroke-dasharray="2 4"/></symbol>
      <symbol id="s-inf" viewBox="0 0 18 18"><path d="M8 1h8v7H8zM8 8v3"/><path d="M1 10h7v7H1z" fill="#dfe2e5"/></symbol>
      <symbol id="s-dyn" viewBox="0 0 18 18"><path d="M1 5h6M4 2v6"/><path d="M8 10h10v5H8z" fill="#dfe2e5" stroke="none"/></symbol>
      <symbol id="s-ort" viewBox="0 0 18 18"><path d="M2 1v15h15M2 10h6v6"/></symbol>
      <symbol id="s-pol" viewBox="0 0 18 18"><path d="M15 6a7 7 0 1 0 1 4M9 10h9M9 10l6-8"/></symbol>
      <symbol id="s-iso" viewBox="0 0 18 18"><path d="M3 3l9 13"/><path d="M12 1l-5 9M9 8v9" stroke="#c4757c"/></symbol>
      <symbol id="s-ang" viewBox="0 0 18 18"><path d="M15 2L2 15h15M9 8a8 8 0 0 1 3 7"/></symbol>
      <symbol id="s-osn" viewBox="0 0 18 18"><path d="M4 3h12v13H4z"/><path d="M1 1h6v6H1z" fill="#5f97cc"/></symbol>
      <symbol id="s-lwt" viewBox="0 0 18 18"><path d="M1 2h16M1 7h12M1 12h16M1 16h11" stroke-width="3"/></symbol>
      <symbol id="s-trn" viewBox="0 0 18 18"><path d="M1 1h16v16H1z"/><path d="M3 4h12M3 10h12" stroke-width="3" stroke-dasharray="3 3"/><path d="M6 7h9M6 14h9" stroke-width="3" stroke-dasharray="3 3"/></symbol>
      <symbol id="s-cyc" viewBox="0 0 18 18"><path d="M1 3h8M4 1v6"/><path d="M6 5h11v12H6z" fill="#7fd8a0" stroke="#fff"/></symbol>
      <symbol id="s-3d" viewBox="0 0 18 18"><path d="M5 5h8v9H5zM5 5l4-4h8v9l-4 4M13 5l4-4"/><path d="M1 11h5v6H1z" stroke="#d9a06a"/></symbol>
      <symbol id="s-ucs" viewBox="0 0 18 18"><path d="M3 3v12h13M1 5l2-3 2 3M13 13l3 2-3 2M11 2L8 7h4l-3 5" stroke-width="1.600"/></symbol>
      <symbol id="s-flt" viewBox="0 0 18 18"><path d="M3 5h10v10H3zM3 5l3-3h10v10l-3 3" stroke-dasharray="3 1"/><path d="M2 5h2M12 15h2" stroke="#7cc0f0" stroke-width="3"/></symbol>
      <symbol id="s-giz" viewBox="0 0 18 18"><path d="M9 1v8l-6 5M9 9l6 5M9 1L4 4v7l5 5 5-5V4z"/></symbol>
      <symbol id="s-ann" viewBox="0 0 18 18"><path d="M9 1v7M9 7l-7 9h4l3-5 3 5h4z" fill="#eef2f6"/><circle cx="14" cy="3" r="2"/></symbol>
      <symbol id="s-ann2" viewBox="0 0 18 18"><path d="M8 3v5M8 7l-6 9h4l2-5 3 5h4z" fill="#dfe2e5"/><path d="M14 1l-2 4h4l-3 4"/></symbol>
      <symbol id="s-ann3" viewBox="0 0 18 18"><path d="M9 2v6M9 7l-6 9h4l2-5 2 5h4z" fill="#dfe2e5"/></symbol>
      <symbol id="s-gear" viewBox="0 0 18 18"><circle cx="9" cy="9" r="5" stroke-width="3"/><path d="M9 1v3M9 14v3M1 9h3M14 9h3M3 3l2 2M13 13l2 2M15 3l-2 2M3 15l2-2" stroke-width="2.500"/></symbol>
      <symbol id="s-plus" viewBox="0 0 18 18"><path d="M9 1v16M1 9h16" stroke-width="2"/></symbol>
      <symbol id="s-rul" viewBox="0 0 18 18"><path d="M5 0h4v18H5z" fill="#dfe2e5"/><path d="M9 3h4M9 8h4M9 13h4" stroke-width="2"/></symbol>
      <symbol id="s-qp" viewBox="0 0 18 18"><path d="M3 1h13v16H3zM5 5h1M8 5h6M5 9h1M8 9h6M5 13h1M8 13h6"/></symbol>
      <symbol id="s-lock" viewBox="0 0 18 18"><path d="M8 13H1V3h15v5M1 5h15"/><path d="M8 11h7v6H8z" fill="#dfe2e5"/><path d="M14 11V9h3v3"/></symbol>
      <symbol id="s-isoo" viewBox="0 0 18 18"><path d="M1 2h6v6H1zM5 16l4-6 4 6z"/><circle cx="14" cy="6" r="3"/></symbol>
      <symbol id="s-hw" viewBox="0 0 18 18"><circle cx="9" cy="9" r="8" stroke="#9cc0e0"/><path d="M5 13l8-8" stroke="#9cc0e0"/></symbol>
      <symbol id="s-prt" viewBox="0 0 18 18"><path d="M4 2h10v4M4 2v4M1 6h16v8H1z" stroke-width="1.600"/><path d="M4 11h10v6H4z" stroke="#e0b898"/></symbol>
      <symbol id="s-w1" viewBox="0 0 18 18"><path d="M3 1h10v8H3z" fill="#4f93d4" stroke="none"/><path d="M1 9h10v5H1z" fill="#f0b95a" stroke="none"/><path d="M12 8l6 10H6z" fill="#f5a623" stroke="none"/><path d="M12 11v5" stroke="#333"/></symbol>
      <symbol id="s-w2" viewBox="0 0 18 18"><path d="M1 1h15v10H1z" fill="#eceeef" stroke="none"/><path d="M3 8l3-4 3 4 4-5" stroke="#2f8f6f"/><path d="M12 8l6 10H6z" fill="#d9763a" stroke="none"/></symbol>
      <symbol id="s-full" viewBox="0 0 18 18"><path d="M1 2h16v14H1zM4 10v3h3M14 8V5h-3M5 12l3-3M13 6l-2 2"/></symbol>
      <symbol id="s-menu" viewBox="0 0 18 18"><path d="M0 3h18M0 9h18M0 15h18" stroke-width="2"/></symbol>

      <symbol id="binoc" viewBox="0 0 18 18"><path d="M1 8l3-6h3v14H1zM17 8l-3-6h-3v14h6zM7 7h4v4H7z" fill="#e6e8ea" stroke="none"/></symbol>
      <symbol id="user" viewBox="0 0 18 18"><path d="M9 0c4 0 4 5 2 9l6 4v3H1v-3l6-4C5 5 5 0 9 0z" fill="#eceef0" stroke="none"/></symbol>
      <symbol id="cart" viewBox="0 0 18 18"><path d="M0 2h3l3 9h9l2-7H5z" fill="#dfe2e5"/><path d="M6 15h2M13 15h2" stroke-width="2.500"/></symbol>
      <symbol id="a360" viewBox="0 0 18 18"><path d="M9 2L3 14h12zM9 4v2" stroke="#cdd6f0" stroke-width="1.600"/><circle cx="9" cy="3" r="2" fill="#dde"/><circle cx="3" cy="14" r="2" fill="#dde"/><circle cx="15" cy="14" r="2" fill="#dde"/></symbol>
      <symbol id="helpb" viewBox="0 0 18 18"><circle cx="9" cy="9" r="8.500" fill="#eef1f6" stroke="none"/><text x="5" y="14" font-size="14" font-weight="700" class="navy">?</text></symbol>
      <symbol id="restore" viewBox="0 0 18 18"><path d="M2 8h10v7H2zM6 7V3h10v8h-3"/></symbol>
    </svg>

    <header class="titlebar">
      <button class="app-logo" aria-label="应用程序菜单">
        <svg viewBox="0 0 41 41"><path d="M3 30L14 3h8l7 26h-7l-3-9-7 3-2 7z" fill="#d31f26"/><path d="M14 10l-4 16 10-5z" fill="#7d0f16"/><path d="M14 3h8l7 26h-3z" fill="#ee4a4c"/><path d="M31 18h7l-3 4z" fill="#333"/></svg>
      </button>
      <div class="title-rows">
        <div class="title-row">
          <button class="qat" aria-label="自定义"><span></span></button>
          <h1>Autodesk AutoCAD 2020 <span>培训楼结构.dwg</span></h1>
          <div class="info">
            <span class="tri-r"></span>
            <input class="search" type="text" placeholder="键入关键字或短语" aria-label="搜索" />
            <svg class="ic"><use href="#binoc"/></svg>
            <button class="login"><svg class="ic"><use href="#user"/></svg>登录</button>
            <i class="caret login-caret"></i>
            <svg class="ic"><use href="#cart"/></svg>
            <svg class="ic"><use href="#a360"/></svg>
            <i class="caret"></i>
            <i class="vsep"></i>
            <svg class="ic"><use href="#helpb"/></svg>
            <i class="caret"></i>
          </div>
          <div class="win-btns">
            <button aria-label="最小化"><svg class="ic"><path d="M3 15h10" stroke-width="2"/></svg></button>
            <button aria-label="还原"><svg class="ic"><use href="#restore"/></svg></button>
            <button aria-label="关闭"><svg class="ic"><path d="M3 3l12 13M15 3L3 16" stroke-width="2"/></svg></button>
          </div>
        </div>
        <nav class="menubar">
          <div class="menu-std">
            <button>文件(F)</button><button>编辑(E)</button><button>视图(V)</button><button>插入(I)</button><button>格式(O)</button><button>工具(T)</button><button>绘图(D)</button><button>标注(N)</button><button>修改(M)</button><button>参数(P)</button><button>窗口(W)</button><button>帮助(H)</button>
          </div>
          <div class="menu-ext">
            <button>TS【图形接口</button><button>平面</button><button>构件</button><button>计算1</button><button>计算2</button><button>工具】</button><button>Dwg合并助手</button><button>文档导入</button><button>易打(Y)</button><button>探索者工具箱</button><button>云注打印</button><button>易批注-通用版</button><button>探索者校审系统</button>
          </div>
          <div class="win-btns small">
            <button aria-label="最小化图形"><svg class="ic"><path d="M3 14h10" stroke-width="2"/></svg></button>
            <button aria-label="还原图形"><svg class="ic"><use href="#restore"/></svg></button>
            <button aria-label="关闭图形"><svg class="ic"><path d="M3 3l11 12M14 3L3 15" stroke-width="2"/></svg></button>
          </div>
        </nav>
      </div>
    </header>

    <nav class="ribbon-tabs">
      <button>默认</button><button>插入</button><button>注释</button><button>参数化</button><button>视图</button><button>管理</button><button>输出</button><button>插件</button><button>精选应用</button><button class="active">审图</button>
      <span class="rt-min"><i></i></span><i class="caret"></i>
    </nav>

    <section class="ribbon">
      <div class="panel">
        <div class="cols">
          <div class="col">
            <button><svg class="ic"><use href="#aa"/></svg>检查文字重叠</button>
            <button><svg class="ic"><use href="#aadim"/></svg>检查标注重叠</button>
            <button><svg class="ic"><use href="#aaval"/></svg>检查标注原值</button>
          </div>
          <div class="col">
            <button><svg class="ic"><use href="#lines"/></svg>消除重线</button>
            <button><svg class="ic"><use href="#solid"/></svg>消重实体</button>
            <button><svg class="ic"><use href="#tip"/></svg>删提示框</button>
          </div>
        </div>
        <h2>检查图面工具</h2>
      </div>
      <div class="panel">
        <div class="cols">
          <div class="col">
            <button><svg class="ic"><use href="#book-in"/></svg>计算书导入</button>
            <button><svg class="ic"><use href="#book-up"/></svg>计算书更新</button>
            <button><svg class="ic"><use href="#book-m"/></svg>计算书归并</button>
          </div>
        </div>
        <h2>计算书</h2>
      </div>
      <div class="panel">
        <div class="cols">
          <button class="big"><svg class="ic"><use href="#beam-switch"/></svg>梁校审<i class="caret"></i></button>
        </div>
        <h2>切换</h2>
      </div>
      <div class="panel">
        <div class="cols">
          <div class="col wide">
            <button><svg class="ic"><use href="#beam-no"/></svg>编号检查</button>
            <button><svg class="ic"><use href="#beam-chk"/></svg>校核梁跨</button>
          </div>
          <div class="col">
            <button><svg class="ic"><use href="#span"/></svg>查改梁跨</button>
            <button><svg class="ic"><use href="#span2"/></svg>修改特性</button>
            <button><svg class="ic"><use href="#span-end"/></svg>结束梁跨</button>
          </div>
          <div class="col">
            <button><svg class="ic"><use href="#sec"/></svg>校核截面</button>
            <button><svg class="ic"><use href="#sec-eye"/></svg>查看截面</button>
            <button><svg class="ic"><use href="#sec-end"/></svg>结束截面</button>
          </div>
          <div class="col">
            <button><svg class="ic"><use href="#area"/></svg>校核面积</button>
            <button><svg class="ic"><use href="#area-v"/></svg>查看面积</button>
            <button><svg class="ic"><use href="#doc-end"/></svg>结束面积</button>
          </div>
          <div class="col">
            <button><svg class="ic"><use href="#norm"/></svg>校核规范</button>
            <button><svg class="ic"><use href="#norm-eye"/></svg>查看规范</button>
            <button><svg class="ic"><use href="#doc-end"/></svg>结束规范</button>
          </div>
          <button class="big"><svg class="ic"><use href="#broom"/></svg>清除数据</button>
        </div>
        <h2>梁校审</h2>
      </div>
      <div class="panel">
        <div class="cols">
          <div class="col">
            <button><svg class="ic"><use href="#n-draw"/></svg>绘制批注</button>
            <button><svg class="ic"><use href="#n-list"/></svg>批注列表</button>
            <button><svg class="ic"><use href="#n-style"/></svg>样式设置</button>
          </div>
          <div class="col">
            <button><svg class="ic"><use href="#n-hide"/></svg>隐藏批注</button>
            <button><svg class="ic"><use href="#n-filter"/></svg>过滤批注</button>
            <button><svg class="ic"><use href="#n-show"/></svg>显示批注</button>
          </div>
          <div class="col">
            <button><svg class="ic"><use href="#n-move"/></svg>移动批注</button>
            <button><svg class="ic"><use href="#n-del"/></svg>删除批注</button>
            <button><svg class="ic"><use href="#n-edit"/></svg>编辑批注</button>
          </div>
          <div class="col">
            <button><svg class="ic"><use href="#n-sum"/></svg>汇总批注</button>
            <button><svg class="ic"><use href="#n-send"/></svg>发送批注</button>
            <button><svg class="ic"><use href="#n-recv"/></svg>接收批注</button>
          </div>
        </div>
        <h2>批注</h2>
      </div>
      <div class="panel">
        <div class="cols">
          <button class="big"><svg class="ic"><use href="#exit"/></svg>退出审图</button>
        </div>
        <h2>退出</h2>
      </div>
    </section>

    <nav class="doc-tabs">
      <button>开始</button>
      <button class="active">培训楼结构*<span>✕</span></button>
      <button class="plus">+</button>
    </nav>

    <section class="toolbars">
      <div class="tb-row">
        <div class="tb">
          <button><svg class="ic"><use href="#pdf"/></svg></button><button><svg class="ic"><use href="#plot1"/></svg></button><button><svg class="ic"><use href="#plot2"/></svg></button><button><svg class="ic"><use href="#plot3"/></svg></button><button><svg class="ic"><use href="#plot4"/></svg></button><button><svg class="ic"><use href="#plot5"/></svg></button><button><svg class="ic"><use href="#xcirc"/></svg></button>
        </div>
        <div class="tb">
          <button><svg class="ic"><use href="#tree"/></svg></button>
        </div>
        <div class="tb">
          <button><svg class="ic"><use href="#new"/></svg></button><button><svg class="ic"><use href="#open"/></svg></button><button><svg class="ic"><use href="#save"/></svg></button>
          <i class="bar"></i>
          <button><svg class="ic"><use href="#print"/></svg></button><button><svg class="ic"><use href="#preview"/></svg></button><button><svg class="ic"><use href="#publish"/></svg></button><button><svg class="ic"><use href="#globe"/></svg></button>
          <i class="bar"></i>
          <button><svg class="ic"><use href="#cut"/></svg></button><button><svg class="ic"><use href="#copyd"/></svg></button><button><svg class="ic"><use href="#paste"/></svg></button><button><svg class="ic"><use href="#match"/></svg></button><button><svg class="ic"><use href="#bedit"/></svg></button>
          <i class="bar"></i>
          <button><svg class="ic"><use href="#undo"/></svg></button><i class="caret"></i><button><svg class="ic"><use href="#redo"/></svg></button><i class="caret"></i>
          <i class="bar"></i>
          <button><svg class="ic"><use href="#hand"/></svg></button><button><svg class="ic"><use href="#zpm"/></svg></button><button><svg class="ic"><use href="#zwin"/></svg></button><button><svg class="ic"><use href="#zprev"/></svg></button>
          <i class="bar"></i>
          <button><svg class="ic"><use href="#props"/></svg></button><button><svg class="ic"><use href="#dcenter"/></svg></button><button><svg class="ic"><use href="#tpal"/></svg></button><button><svg class="ic"><use href="#sset"/></svg></button><button><svg class="ic"><use href="#markup"/></svg></button><button><svg class="ic"><use href="#calc"/></svg></button>
          <i class="bar"></i>
          <button><svg class="ic"><use href="#help"/></svg></button>
        </div>
        <div class="tb">
          <button><svg class="ic"><use href="#layers"/></svg></button>
          <div class="combo layer">
            <svg class="ic"><use href="#bulb"/></svg><svg class="ic"><use href="#sun"/></svg><svg class="ic"><use href="#vpf"/></svg><svg class="ic"><use href="#unlock"/></svg><i class="swatch"></i>
            <select aria-label="图层"><option>0</option></select>
          </div>
          <button><svg class="ic"><use href="#lay-cur"/></svg></button><button><svg class="ic"><use href="#lay-prev"/></svg></button><button><svg class="ic"><use href="#layers"/></svg></button>
        </div>
        <div class="tb cn">
          <button>层</button><button>编</button><button><svg class="ic"><use href="#fan"/></svg></button><button>平</button><button class="blk">平<sub>+</sub></button><button>引</button><button>断</button><button>齐</button>
        </div>
      </div>
      <div class="tb-row">
        <div class="tb">
          <button><svg class="ic"><use href="#astyle"/></svg></button>
          <div class="combo mid"><select aria-label="文字样式"><option>Standard</option></select></div>
          <i class="bar"></i>
          <button><svg class="ic"><use href="#dimst"/></svg></button>
          <div class="combo mid"><select aria-label="标注样式"><option>TSSD_30_100</option></select></div>
          <i class="bar"></i>
          <button><svg class="ic"><use href="#tblst"/></svg></button>
          <div class="combo"><select aria-label="表格样式"><option>Standard</option></select></div>
          <i class="bar"></i>
          <button><svg class="ic"><use href="#mlst"/></svg></button>
          <div class="combo mid"><select aria-label="引线样式"><option>Standard</option></select></div>
        </div>
        <div class="tb">
          <div class="combo color"><i class="swatch"></i><select aria-label="颜色"><option>ByLayer</option></select></div>
          <i class="bar"></i>
          <div class="combo ltype"><i class="ln"></i><select aria-label="线型"><option>ByLayer</option></select></div>
          <i class="bar"></i>
          <div class="combo lw"><i class="ln"></i><select aria-label="线宽"><option>ByLayer</option></select></div>
          <i class="bar"></i>
          <div class="combo pst"><select aria-label="打印样式"><option>ByColor</option></select></div>
        </div>
        <div class="tb">
          <button><svg class="ic"><use href="#cadfold"/></svg></button><button><svg class="ic"><use href="#gridr"/></svg></button><button><svg class="ic"><use href="#cal"/></svg></button>
          <i class="bar"></i>
          <button><svg class="ic"><use href="#yfold"/></svg></button><button><svg class="ic"><use href="#bpan"/></svg></button><button><svg class="ic"><use href="#bpan2"/></svg></button><button><svg class="ic"><use href="#cadg"/></svg></button>
          <i class="bar"></i>
          <button><svg class="ic"><use href="#mag"/></svg></button><button><svg class="ic"><use href="#torch"/></svg></button><button><svg class="ic"><use href="#ie"/></svg></button>
        </div>
      </div>
    </section>

    <main class="main">
      <div class="left-main">
        <div class="work">
          <aside class="vbar left">
            <div class="vgroup tiles">
              <button>拖</button><button>改</button><button>核</button><button>书</button><button>编</button><button>块</button><button>择</button><button>选</button><button>显</button><button>界</button>
            </div>
            <div class="vgroup">
              <button><svg class="ic"><use href="#d-line"/></svg></button><button><svg class="ic"><use href="#d-xline"/></svg></button><button><svg class="ic"><use href="#d-pl"/></svg></button><button><svg class="ic"><use href="#d-poly"/></svg></button><button><svg class="ic"><use href="#d-rect"/></svg></button><button><svg class="ic"><use href="#d-arc"/></svg></button><button><svg class="ic"><use href="#d-circ"/></svg></button><button><svg class="ic"><use href="#d-cloud"/></svg></button><button><svg class="ic"><use href="#d-spl"/></svg></button><button><svg class="ic"><use href="#d-ell"/></svg></button><button><svg class="ic"><use href="#d-ella"/></svg></button><button><svg class="ic"><use href="#d-ins"/></svg></button><button><svg class="ic"><use href="#d-blk"/></svg></button><button><svg class="ic"><use href="#d-pt"/></svg></button><button><svg class="ic"><use href="#d-hat"/></svg></button><button><svg class="ic"><use href="#d-grad"/></svg></button><button><svg class="ic"><use href="#d-reg"/></svg></button><button><svg class="ic"><use href="#d-tab"/></svg></button><button><svg class="ic"><use href="#d-a"/></svg></button><button><svg class="ic"><use href="#d-sel"/></svg></button>
            </div>
          </aside>

          <div class="center">
            <nav class="ts-menu">
              <button>设置</button><button class="c3">模板图</button><button class="c1">柱</button><button>墙一</button><button>墙二</button><button class="c1">梁</button><button class="c4">板筋绘制</button><button class="c4">板编辑一</button><button class="c4">板编辑二</button><button class="c4">板筋删除</button><button class="c1">桩</button><button class="c3">计算书</button><button class="c3">文字一</button><button class="c3">文字二</button><button>工具</button><button>图层</button><button class="c3">组与块</button><button>帮助</button>
            </nav>
            <div class="canvas">
              <svg class="drawing" viewBox="29 281 1826 681" preserveAspectRatio="xMidYMin slice">
                <defs>
                  <pattern id="pw" width="67" height="40" patternUnits="userSpaceOnUse"><path d="M0 0h67v40H0z" fill="#aaa"/><path d="M2 0v40M9 0v40M15 0v40M20 0v40M28 0v40M33 0v40M41 0v40M46 0v40M54 0v40M61 0v40" stroke="#fff" stroke-width="4"/><path d="M12 0v40M38 0v40M50 0v40" stroke="#555" stroke-width="2"/></pattern>
                  <pattern id="pg" width="67" height="40" patternUnits="userSpaceOnUse"><path d="M0 0h67v40H0z" fill="#0fa50f"/><path d="M2 0v40M9 0v40M15 0v40M20 0v40M28 0v40M33 0v40M41 0v40M46 0v40M54 0v40M61 0v40" stroke="#1ff01f" stroke-width="4"/><path d="M12 0v40M50 0v40" stroke="#064" stroke-width="2"/></pattern>
                  <pattern id="pm" width="67" height="40" patternUnits="userSpaceOnUse"><path d="M0 0h67v40H0z" fill="#a010a0"/><path d="M2 0v40M9 0v40M20 0v40M28 0v40M41 0v40M54 0v40M61 0v40" stroke="#f020f0" stroke-width="4"/></pattern>
                </defs>
                <!-- page number text in the block title -->
                <path class="pl" d="M199.500 600L118 800M275 791V616L217 733h88M29 627l7-11v175"/>
                <!-- UCS icon -->
                <path class="pl thin" d="M47.500 891v53H100M42 938h11v11H42z"/>
                <text class="ucs" x="49" y="887">Y</text>
                <text class="ucs" x="105" y="942">X</text>
                <!-- sheet frame -->
                <path class="frame1" d="M417 422h910v514H417z"/>
                <path class="frame2" d="M439.500 431.500h880v496H439.500z"/>
                <path class="bind" d="M427 430h11v92h-11zM430 430v92M433 430v92M427 446h11M427 461h11M427 477h11M427 491h11M427 507h11"/>

                <!-- notes, upper left part -->
                <g transform="translate(410 410) scale(.333333)">
                  <path class="hd" d="M115 128h115M115 378h218M115 667h177M760 774h112"/>
                  <text class="dt" x="895" y="104">结 构 设 计</text>
                  <path class="ul" d="M895 113h139"/>
                  <path class="t" d="M133 154h57M268 154h42M345 154h70M420 154h40M505 154h65M620 154h40M133 196h165M353 196h10M133 216h449M133 237h545M133 257h591M147 278h265M133 298h322M480 298h113M133 318h577M147 340h373M133 360h192M145 652h585M778 153h256M790 173h244M790 194h244M790 215h165M790 236h244M778 256h170M778 402h65M790 423h244M790 444h244M790 465h244M790 485h244M790 505h244M790 527h244M778 550h512M778 569h304M778 589h585M790 735h460M790 756h362M778 797h57M928 797h25M1225 797h25M1297 797h45"/>
                  <path class="t g" d="M197 154h46M315 154h18M577 154h42M303 196h35M458 298h20"/>
                  <path class="t r" d="M464 154h38"/>
                  <path class="t m" d="M835 797h90M970 797h192M1255 797h38"/>
                  <path class="ul" d="M192 162h72M310 162h24M380 162h24M462 162h40M577 162h42M303 204h50M835 806h90M958 806h260"/>
                  <path class="cell" d="M142 391h248v249H142zM298 391v186M403 391h247v249H403zM559 391v249M142 412h248M142 432.500h248M142 453h248M142 474h248M142 494.500h248M142 515h248M142 536h248M142 557h248M142 577.500h248M142 598h248M142 619h248M403 412h247M403 432.500h247M403 453h247M403 474h247M403 494.500h247M403 515h247M403 536h247M403 557h247M403 598h247M403 619h247"/>
                  <path class="t" d="M207 401h8M228 401h8M330 401h8M350 401h8M465 401h8M487 401h8M588 401h8M612 401h8"/>
                  <path class="t g" d="M147 422h75M147 443h125M147 463h130M147 484h52M147 505h60M147 525h60M147 546h90M147 567h90M147 588h228M147 608h150M147 629h198M307 422h74M307 443h74M307 463h74M307 484h74M307 505h74M307 525h74M300 546h86M307 567h74M407 422h95M407 443h95M407 463h75M407 484h60M407 505h75M407 525h60M407 546h60M407 567h118M407 588h65M407 608h66M407 629h133M566 422h76M566 443h76M566 463h76M575 484h60M566 505h76M566 525h76M562 546h86M563 577h78M572 608h64M563 629h78"/>
                  <path class="cell" d="M142 682h583v126H142zM142 703h583M142 724h583M142 745h583M142 766h583M142 787h583M206 682v105M284 682v105M346 682v105M424 682v105M508 682v105M583 682v105M650 682v105M236 787v23"/>
                  <path class="gl" d="M348 700l76-18M348 722l76-19"/>
                  <path class="t" d="M154 692h42M150 712h48M160 733h30M154 754h44M162 775h28M288 692h57M294 712h42M294 754h46M288 775h52M433 692h60M452 712h26M446 733h38M460 754h80M440 775h46M588 692h58M592 712h50M600 733h34M590 754h46M586 775h62M165 797h50M470 797h16"/>
                  <path class="t g" d="M235 692h20M235 712h20M238 754h14M238 775h14M372 754h26M376 775h20M540 692h14M538 712h20M540 733h14M535 754h22M535 775h22M597 754h40M640 754h72M680 712h16M672 775h30"/>
                  <path class="t m" d="M295 733h44M678 692h18M664 733h46"/>
                  <path class="cell" d="M785 267h260v123H785zM818 267v123M876 267v123M931 267v123M1006 267v123M785 287h250M785 308h250M785 329h220M785 349h220M785 370h250"/>
                  <path class="t" d="M790 276h26M826 276h38M880 276h50M935 276h70M800 297h8M835 297h20M892 297h20M958 297h20M796 318h14M833 318h26M890 318h24M958 318h20M796 339h14M822 339h50M882 339h46M958 339h20M796 360h14M822 360h50M882 360h46M958 360h20M796 380h14M835 380h20M892 380h20M958 380h20"/>
                  <path class="cell" d="M790 618h547v104H790zM880 618v104M934 618v104M1026 618v104M1103 618v104M1180 618v104M1258 618v104M790 639h547M790 660h547M880 680h457M790 680h90M880 701h457"/>
                  <path class="t g" d="M847 628h16M965 628h16M1043 628h42M1118 628h46M1190 628h58M1290 628h14M797 649h78M884 649h48M950 649h52M1048 649h30M1125 649h34M1208 649h22M1280 649h36M802 670h66M884 670h48M945 670h66M1048 670h30M1125 670h34M1208 670h22M884 691h48M950 691h52M1048 691h30M1125 691h34M1208 691h22M1280 691h36M884 711h48M945 711h66M1048 711h30M1125 711h34M1208 711h22M820 701h16"/>
                </g>

                <!-- notes, lower left part -->
                <g transform="translate(410 670) scale(.333333)">
                  <path class="hd" d="M115 137h83M115 181h146M115 446h185M760 368h112"/>
                  <path class="cell" d="M142 28v102h583V28zM142 68h583M142 89h583M142 110h583M236 28v102M142 28l94 40"/>
                  <path class="t" d="M148 54h28M202 44h28M146 78h88M176 99h28M168 120h44M456 47h42M133 163h37M455 163h170M147 350h565M160 371h537M180 392h113M160 411h423M160 432h320M133 468h167M141 675h479M177 695h290M160 716h403M165 730h415M177 745h406M177 757h300M177 768h140M790 38h80M965 38h195M1180 38h110M1307 38h26M778 59h589M790 80h250M778 100h589M790 121h570M790 142h410M778 163h589M790 183h160M778 204h582M790 225h240M778 245h517M778 267h589M790 286h575M790 308h295M778 328h322M778 349h262M778 391h590M787 684h318M803 699h177M803 716h434M820 733h220M803 750h377M803 765h242"/>
                  <path class="t m" d="M462 78h32M442 99h72M446 120h62M200 163h225M893 38h35M1163 38h12M1293 38h10"/>
                  <path class="t g" d="M657 163h22"/>
                  <path class="ul" d="M178 171h269M630 171h95M875 47h86"/>
                  <path class="cell" d="M147 191h485v150H147zM293 191v150M346 191v150M390 191v150M534 191v150M586 191v150M147 215h485M147 235h485M147 256h485M147 276h485M147 297h485M147 318h485"/>
                  <path class="t" d="M215 202h12M296 202h50M360 202h16M455 202h14M536 202h48M601 202h16"/>
                  <path class="t g" d="M153 224h52M153 245h18M153 266h24M153 286h68M153 307h72M153 328h32M316 224h8M314 245h12M316 266h8M314 286h12M304 307h32M314 328h12M396 224h24M556 224h8"/>
                  <path class="cell" d="M141 477h287v186H141zM174 497v125M311 477v186M366 477v186M141 497h287M174 518h254M174 539h254M174 559h254M174 580h254M174 601h254M141 622h287M141 643h287"/>
                  <path class="t g" d="M142 487h32M230 487h28M315 487h50M390 487h14M226 508h34M192 528h104M216 549h56M218 570h52M218 591h52M218 612h52M221 632h14M204 653h46M149 591h16M328 508h20M328 528h20M328 549h20M328 570h20M328 591h20M328 612h20M317 632h38M328 653h20M368 653h58"/>
                  <path class="cell" d="M785 401h275v269H785zM1070 401h275v269h-275zM838 401v269M915 401v269M994 401v269M1125 401v227M1202 401v269M1278 401v227M785 421h275M838 442h157M785 463h275M838 484h157M785 504h275M838 525h157M838 546h157M838 566h157M785 587h275M838 608h157M785 628h275M838 649h157M1070 421h275M1070 442h275M1070 463h275M1070 484h275M1070 504h275M1125 525h154M1125 546h154M1125 566h154M1070 587h275M1070 608h208M1070 628h275M1070 649h275"/>
                  <path class="t" d="M795 411h8M820 411h8M862 411h8M885 411h8M922 411h66M1020 411h14M1080 411h8M1105 411h8M1150 411h8M1172 411h8M1209 411h66M1305 411h14"/>
                  <path class="t g" d="M846 431h64M862 452h30M846 473h64M862 494h30M846 515h64M862 536h28M885 556h22M885 577h22M845 567h28M862 598h30M862 618h30M866 639h22M866 660h22M805 442h12M791 484h44M801 546h24M805 608h12M797 650h32M1002 431h50M1006 452h44M1002 473h50M1006 494h44M1078 431h38M1078 452h40M1078 473h40M1078 494h40M1078 546h42M1082 598h32M1072 618h50M1150 431h30M1150 452h30M1138 473h52M1150 494h30M1133 515h60M1133 536h60M1133 556h60M1133 577h60M1133 598h60M1133 618h60M1115 639h42M1087 660h242"/>
                  <path class="t g" d="M950 431h12M950 452h12M950 473h12M950 494h12M950 515h12M950 536h12M950 556h12M950 577h12M950 598h12M950 618h12M950 639h12M950 660h12M1236 431h12M1236 452h12M1236 473h12M1236 494h12M1236 515h12M1236 536h12M1236 556h12M1236 577h12M1236 598h12M1236 618h12M1236 639h12"/>
                </g>

                <!-- third column below the dialog, title block top -->
                <g transform="translate(740 420) scale(.395408 .333333)">
                  <path class="t" d="M373 522h357M373 538h442M373 559h485M366 580h74M373 600h272M373 621h240M373 642h234M373 663h165M366 684h74M373 705h467M373 726h90M485 726h30M540 726h47M373 746h334M373 767h487M373 787h60M373 808h260M373 829h457M1266 312h20M1268 354h6M1314 40h36M1318 176h20M1318 194h134M1318 207h140M1318 220h116M1318 680h20M1352 680h8M1370 680h8M1394 680h24M1430 680h8M1446 680h8M1314 698h56M1314 735h78M1314 776h36"/>
                  <path class="t g" d="M353 685h12"/>
                  <path class="ul" d="M465 733h74"/>
                  <path class="wl" d="M1311 166h153M1311 617h153M1311 635h153M1311 653h153M1311 671h153M1311 690h153M1311 727h153M1311 767h153M1343 617v73M1387 617v73M1422 617v73"/>
                </g>

                <circle cx="1260" cy="728" r="30" fill="#0000ff"/>
                <path d="M1258.500 431v497" stroke="#fff" stroke-width="2"/>
                <path d="M1258.500 698v60" stroke="#e8e020" stroke-width="2"/>

                <!-- third column, lower part with details and title block -->
                <g transform="translate(850 670) scale(.333333)">
                  <path class="cell" d="M124 87h417v188H124zM124 110h417M229 130h234M124 151h417M151 171h235M124 193h262M151 214h235M151 235h235M124 254h417M151 151v103M229 110v165M308 110v125M386 110v144M463 110v165M124 110l105 41"/>
                  <path class="t" d="M310 98h50M173 121h48M131 140h32M234 120h64M324 120h42M400 120h48M234 140h64M324 140h42M400 140h48M490 131h22M103 287h69M113 308h477M113 328h510M113 349h450M160 506h74M478 506h92M330 521h142M303 538h190M113 556h260M113 577h369M113 599h430M113 620h577M113 640h150M113 661h575M113 682h177M284 384h76M290 398h70M588 384h82M596 398h70M190 442h32M207 467h26M245 467h18M290 467h16M420 430h16M500 440h40M580 436h34M555 466h16M598 466h14M442 466h36M450 480h26M275 436h32M134 466h16"/>
                  <path class="t g" d="M597 308h81M130 172h20M167 161h48M167 182h48M167 203h48M162 224h60M172 244h38M258 161h22M335 161h22M264 182h88M258 203h22M335 203h22M258 224h22M335 224h22M264 244h88M402 203h48M470 203h60M470 224h62M124 224h24M150 265h54M318 265h54M180 396h30M355 436h14M662 436h14M470 396h10"/>
                  <path class="ul" d="M590 317h100"/>
                  <path class="dl" d="M163 372h50M170 372v116M205 372v46h140v46M205 488v-30l140-14M163 488h50M478 372h40M484 372v46h-76v36h76v34M510 372v46h142v36l-142 8v26M478 488h40M242 442l34-50h85M548 442l38-50h85M406 410v52"/>
                  <path class="gd" d="M180 402h76M180 396v12M215 396v12M165 425v55M210 486h135M345 462v24M352 418h22M358 418v42M352 460h22M370 418v42M515 402h48M520 482h134M654 462v20M660 418h22M666 418v40M660 458h22M678 418v40"/>
                  <path class="md" d="M180 480v-52h76l55 24M225 440l40 18M430 456l45-34h62l68 32M535 440l40 20M305 528h188"/>
                  <path class="wl" d="M1225 17h182M1225 134h182M1225 217h182M1225 301h182M1225 352h182M1225 405h182M1225 457h182M1225 475h182M1225 493h182M1225 511h182M1225 529h182M1225 547h182M1225 565h182M1225 583h182M1328 457v126M1277 457v126M1225 703h182M1225 726h182M1225 749h182M1270 703v70M1315 703v70M1360 703v70"/>
                  <path class="t" d="M1228 27h46M1228 311h44M1248 327h40M1228 363h38M1248 379h54M1228 415h44M1248 433h38M1230 466h8M1262 466h8M1230 484h44M1230 502h44M1230 520h8M1262 520h8M1230 538h8M1262 538h8M1230 556h8M1262 556h8M1230 575h8M1262 575h8M1230 595h8M1252 595h10M1275 641h70M1230 716h10M1250 716h8M1280 716h22M1322 716h10M1344 716h8M1366 716h30M1230 740h10M1250 740h8M1322 740h10M1344 740h8M1366 740h30M1230 763h10M1250 763h8M1272 763h40M1322 763h10M1344 763h8"/>
                  <path class="t y" d="M1228 146h74M1258 226h44"/>
                  <path d="M1233 176v50l10-9 8 17 9-5-8-15h13z" fill="#fff" stroke="#222" stroke-width="2"/>
                </g>

                <!-- view cube -->
                <circle cx="1774" cy="360" r="51" fill="none" stroke="#2e2e2e" stroke-width="12"/>
                <path d="M1750 335h49v50h-49z" fill="#9fa19f"/>
                <path d="M1759 345h31v31h-31z" fill="#90949a"/>
                <g class="cube" text-anchor="middle">
                  <text x="1774" y="370" class="top">上</text>
                  <text x="1774" y="314">北</text><text x="1774" y="423">南</text><text x="1720" y="368">西</text><text x="1829" y="368">东</text>
                </g>
                <rect x="1750" y="445" width="49" height="17" rx="4" fill="#85858f"/>
                <text x="1755" y="457" class="wcs">WCS</text>
              </svg>
              <div class="vp-label">[−][俯视][二维线框]</div>

              <section class="dialog" role="dialog" aria-label="打印作业进度">
                <h3>打印作业进度</h3>
                <div class="dlg-body">
                  <div class="dlg-top">
                    <div>
                      <p>正在处理图纸: Model (培训楼结构.dwg)</p>
                      <p class="in">状态: &lt; 正在重生成图纸 &gt;</p>
                    </div>
                    <svg class="plotter" viewBox="0 0 34 34"><path d="M1 12L26 1l6 3v8L7 22l-6-3z" fill="#8fa0c4"/><path d="M1 12L26 1l6 3L7 14z" fill="#dfe5f2"/><path d="M1 13l5 2v6l-5-2z" fill="#33406a"/><path d="M9 20v8M27 11v11M2 29l16 3M18 24l14 1M9 28l8 4M27 20l-8 4" stroke="#8492b6" stroke-width="3"/><path d="M1 29h3M15 33h3M30 26h3" stroke="#44507a" stroke-width="3"/></svg>
                  </div>
                  <p class="in lab">进度:</p>
                  <div class="progress"></div>
                  <div class="dlg-btns"><button>帮助(H)</button><button class="def">取消(C)</button></div>
                </div>
              </section>
            </div>
            <div class="scale-bar">
              <div class="sb-right">
                <label for="s1">绘图1:</label><select id="s1"><option>100</option></select>
                <label for="s2">出图1:</label><select id="s2"><option>100</option></select>
                <label for="s3">绘图状态</label><select id="s3" class="long"><option>通用</option></select>
                <button>帮助</button>
              </div>
            </div>
          </div>

          <aside class="vbar right">
            <div class="vgroup">
              <button><svg class="ic"><use href="#m-erase"/></svg></button><button><svg class="ic"><use href="#m-copy"/></svg></button><button><svg class="ic"><use href="#m-mir"/></svg></button><button><svg class="ic"><use href="#m-off"/></svg></button><button><svg class="ic"><use href="#m-arr"/></svg></button><button><svg class="ic"><use href="#m-mov"/></svg></button><button><svg class="ic"><use href="#m-rot"/></svg></button><button><svg class="ic"><use href="#m-sca"/></svg></button><button><svg class="ic"><use href="#m-str"/></svg></button><button><svg class="ic"><use href="#m-trim"/></svg></button><button><svg class="ic"><use href="#m-ext"/></svg></button><button><svg class="ic"><use href="#m-brk"/></svg></button><button><svg class="ic"><use href="#m-brk2"/></svg></button><button><svg class="ic"><use href="#m-join"/></svg></button><button><svg class="ic"><use href="#m-cha"/></svg></button><button><svg class="ic"><use href="#m-fil"/></svg></button><button><svg class="ic"><use href="#m-ble"/></svg></button><button><svg class="ic"><use href="#m-exp"/></svg></button>
            </div>
            <div class="vgroup">
              <button><svg class="ic"><use href="#o-1"/></svg></button><button><svg class="ic"><use href="#o-2"/></svg></button><button><svg class="ic"><use href="#o-3"/></svg></button><button><svg class="ic"><use href="#o-4"/></svg></button>
              <i class="hbar"></i>
              <button><svg class="ic"><use href="#o-5"/></svg></button><button><svg class="ic"><use href="#o-6"/></svg></button>
            </div>
          </aside>
        </div>

        <section class="command">
          <div class="cmd-side"><i></i><span>✕</span><svg class="ic"><path d="M2 16l8-8M16 2l-4 1-2 4 2 2 4-1 1-4" stroke-width="2.500"/></svg></div>
          <div class="cmd-main">
            <div class="history">
              <p>指定打印窗口</p>
              <p>指定第一个角点: 指定对角点: 有效打印区域:  1043.92 宽 X 590.00 高</p>
            </div>
            <div class="prompt">
              <svg viewBox="0 0 18 14"><path d="M1 1h16v12H1zM1 3h16M3 6l3 2-3 2M7 11h4" fill="none" stroke="#555"/></svg>
              <i class="caret"></i>
              <input type="text" value="PLOT" aria-label="命令行" />
            </div>
          </div>
        </section>
      </div>

      <aside class="tssd">
        <div class="grip"><i></i><button aria-label="关闭">x</button></div>
        <header>TSSD2021<br>[1: 100]</header>
        <div class="tssd-body">
          <div class="tssd-icons">
            <svg class="ic"><use href="#t1"/></svg><svg class="ic"><use href="#t2"/></svg><svg class="ic"><use href="#t3"/></svg><svg class="ic"><use href="#t4"/></svg><svg class="ic"><use href="#t5"/></svg><svg class="ic"><use href="#t6"/></svg><svg class="ic"><use href="#t7"/></svg><svg class="ic"><use href="#t8"/></svg><svg class="ic"><use href="#t9"/></svg><svg class="ic"><use href="#t10"/></svg><svg class="ic"><use href="#t11"/></svg><svg class="ic"><use href="#t12"/></svg><svg class="ic"><use href="#t13"/></svg><svg class="ic"><use href="#t14"/></svg><svg class="ic"><use href="#t15"/></svg><svg class="ic"><use href="#t16"/></svg><b>字</b><b>字</b><svg class="ic"><use href="#t19"/></svg><svg class="ic"><use href="#t20"/></svg><svg class="ic"><use href="#t21"/></svg><svg class="ic"><use href="#t22"/></svg><svg class="ic"><use href="#t23"/></svg><svg class="ic"><use href="#t24"/></svg><svg class="ic"><use href="#t25"/></svg><svg class="ic"><use href="#t26"/></svg><svg class="ic"><use href="#t11"/></svg><svg class="ic"><use href="#yfold"/></svg><svg class="ic"><use href="#t29"/></svg>
          </div>
          <ul>
            <li>初始设置</li>
            <li class="sep"></li>
            <li class="sub">图形接口</li>
            <li class="sep"></li>
            <li class="sub">布置轴网</li>
            <li class="sub">布置柱子</li>
            <li class="sub">梁绘制</li>
            <li class="sub">墙体绘制</li>
            <li class="sub">楼板设计</li>
            <li>楼梯平面</li>
            <li class="sub">基础承台</li>
            <li class="sep"></li>
            <li class="sub">构件绘图</li>
            <li class="sub">算构件 1</li>
            <li class="sub">算构件 2</li>
            <li class="sep"></li>
            <li class="sub">钢筋绘制</li>
            <li class="sub">钢筋工具</li>
            <li class="sub">尺寸标注</li>
            <li class="sub">书写文字</li>
            <li class="sub">文字工具</li>
            <li class="sub">表格绘制</li>
            <li class="sub">钢结构</li>
            <li class="sub">图层显示</li>
            <li class="sub">组与图块</li>
            <li class="sub">实体工具</li>
            <li class="sub">其他工具</li>
            <li class="sub">批注</li>
            <li class="sep"></li>
            <li>标面积</li>
            <li>符 号...</li>
            <li>图库管理</li>
            <li>更新说明</li>
          </ul>
        </div>
      </aside>

      <div class="brand">
        <svg viewBox="0 0 58 56"><path d="M45 20C42 12 30 14 22 22c-9 9-8 22 2 26 9 4 22-1 33-10-4 12-16 19-28 17C11 52 2 42 1 28 1 12 14 0 30 1c10 1 17 8 15 19z" fill="#d6081f"/><path d="M2 34l8 1 2 6 5 2 2 6" stroke="#fff" stroke-width="2" fill="none" stroke-dasharray="2 2"/></svg>
        <div><strong>探索者软件</strong><em>Explorer Software</em></div>
      </div>
    </main>

    <footer class="status">
      <nav class="layouts"><button class="active">模型</button><button>Layout1</button><button>Layout2</button><button class="plus">+</button></nav>
      <div class="st">
        <span class="scale">当前比例 1:100</span><span class="coord">1201850.0804, 555124.6339, 0.0000</span><button class="txt">模型</button>
        <button><svg class="ic"><use href="#s-grid"/></svg></button><button><svg class="ic"><use href="#s-snap"/></svg></button><i class="caret"></i>
        <button><svg class="ic"><use href="#s-inf"/></svg></button><button><svg class="ic"><use href="#s-dyn"/></svg></button><button><svg class="ic"><use href="#s-ort"/></svg></button><button><svg class="ic"><use href="#s-pol"/></svg></button><i class="caret"></i>
        <button><svg class="ic"><use href="#s-iso"/></svg></button><i class="caret"></i>
        <button class="on"><svg class="ic"><use href="#s-ang"/></svg></button><button class="on"><svg class="ic"><use href="#s-osn"/></svg></button><i class="caret"></i>
        <button class="on"><svg class="ic"><use href="#s-lwt"/></svg></button><button class="on"><svg class="ic"><use href="#s-trn"/></svg></button><button><svg class="ic"><use href="#s-cyc"/></svg></button><button><svg class="ic"><use href="#s-3d"/></svg></button><i class="caret"></i>
        <button class="on"><svg class="ic"><use href="#s-ucs"/></svg></button><button><svg class="ic"><use href="#s-flt"/></svg></button><i class="caret"></i>
        <button class="on"><svg class="ic"><use href="#s-giz"/></svg></button><i class="caret"></i>
        <button class="on"><svg class="ic"><use href="#s-ann"/></svg></button><button><svg class="ic"><use href="#s-ann2"/></svg></button><button><svg class="ic"><use href="#s-ann3"/></svg></button>
        <button class="txt">1:1 / 100%</button><i class="caret"></i>
        <button><svg class="ic"><use href="#s-gear"/></svg></button><i class="caret"></i>
        <button><svg class="ic"><use href="#s-plus"/></svg></button>
        <button class="units"><svg class="ic"><use href="#s-rul"/></svg>小数</button><i class="caret"></i>
        <button><svg class="ic"><use href="#s-qp"/></svg></button><button><svg class="ic"><use href="#s-lock"/></svg></button><i class="caret"></i>
        <button><svg class="ic"><use href="#s-isoo"/></svg></button><button class="on wide"><svg class="ic"><use href="#s-hw"/></svg></button>
        <button class="wide"><svg class="ic"><use href="#s-prt"/></svg></button><button><svg class="ic"><use href="#s-w1"/></svg></button><button><svg class="ic"><use href="#s-w2"/></svg></button>
        <button class="wide"><svg class="ic"><use href="#s-full"/></svg></button><button><svg class="ic"><use href="#s-menu"/></svg></button>
      </div>
    </footer>
  </body>
</html>
```

FILE: styles.css
```
* {
  box-sizing: border-box;
}
body {
  margin: 0;
  height: 100vh;
  display: flex;
  flex-direction: column;
  overflow: hidden;
  background: #212b32;
  color: #dfe2e5;
  font: 13px "Open Sans", "Noto Sans CJK SC", sans-serif;
}
h1,
h2,
h3,
p,
ul {
  margin: 0;
  padding: 0;
  font-weight: 400;
  font-size: 13px;
  list-style: none;
}
button {
  margin: 0;
  padding: 0;
  border: 0;
  background: none;
  color: inherit;
  font: inherit;
  white-space: nowrap;
  cursor: pointer;
}
.sprite {
  display: none;
}
.ic {
  width: 17px;
  height: 17px;
  flex: none;
  display: block;
  fill: none;
  stroke: #dfe2e5;
  stroke-width: 1.3;
}
symbol text {
  fill: #dfe2e5;
  stroke: none;
  font-family: "Liberation Sans", sans-serif;
}
symbol .dark {
  fill: #39434f;
}
symbol .navy {
  fill: #24407c;
}
symbol .blue {
  fill: #6db1e6;
}
.caret {
  flex: none;
  width: 15px;
  display: flex;
  justify-content: center;
}
.caret::before {
  content: "";
  border: 4px solid transparent;
  border-top: 5px solid #d5d8db;
  border-bottom: 0;
}

/* title bar */
.titlebar {
  flex: none;
  display: flex;
  height: 46px;
  border-bottom: 1px solid #3e4952;
}
.app-logo {
  width: 41px;
  height: 41px;
  background: linear-gradient(#c9c9c9, #8b8d8e);
  border: 1px solid #aaa;
}
.app-logo svg {
  display: block;
}
.title-rows {
  flex: 1;
  display: flex;
  flex-direction: column;
}
.title-row {
  display: flex;
  align-items: center;
  height: 22px;
}
.qat {
  width: 28px;
  display: flex;
  justify-content: center;
}
.qat span {
  width: 9px;
  border-top: 2px solid #dfe2e5;
  display: flex;
  justify-content: center;
}
.qat span::before {
  content: "";
  margin-top: 2px;
  border: 4px solid transparent;
  border-top: 5px solid #dfe2e5;
  border-bottom: 0;
}
h1 {
  flex: 1;
  padding-left: 531px;
}
h1 span {
  padding-left: 12px;
}
.info {
  display: flex;
  align-items: center;
  gap: 8px;
  margin-right: 65px;
}
.info .caret {
  width: 8px;
}
.info .caret::before {
  border-width: 4px 3px 0;
}
.info .login-caret {
  margin-left: 52px;
}
.tri-r {
  border: 4px solid transparent;
  border-left: 5px solid #dfe2e5;
  border-right: 0;
}
.search {
  width: 184px;
  height: 22px;
  padding: 0 3px;
  border: 0;
  border-radius: 0;
  background: #465261;
  font: italic 12px "Open Sans", "Noto Sans CJK SC", sans-serif;
}
.search::placeholder {
  color: #b4bac0;
}
.login {
  display: flex;
  gap: 4px;
  align-items: center;
}
.vsep {
  width: 1px;
  height: 22px;
  background: #4a545d;
}
.win-btns {
  display: flex;
  gap: 9px;
  padding-right: 5px;
}
.win-btns.small {
  margin-left: auto;
  gap: 2px;
  padding-right: 2px;
}
.menubar {
  flex: 1;
  display: flex;
  align-items: center;
  padding: 2px 0 0 15px;
  color: #c3c7cb;
}
.menu-std {
  display: flex;
  gap: 24px;
}
.menu-ext {
  display: flex;
  gap: 14px;
  margin-left: 24px;
}

/* ribbon */
.ribbon-tabs {
  flex: none;
  display: flex;
  align-items: flex-end;
  height: 22px;
  padding-left: 1px;
  color: #c3c7cb;
}
.ribbon-tabs button {
  height: 20px;
  padding: 0 10px;
  line-height: 17px;
}
.ribbon-tabs .active {
  background: #3b4551;
  color: #eceeef;
}
.ribbon-tabs .caret {
  padding-bottom: 8px;
}
.rt-min {
  display: flex;
  justify-content: center;
  width: 14px;
  height: 9px;
  margin: 0 0 6px 23px;
  border-radius: 2px;
  background: #dfe2e5;
}
.rt-min i {
  align-self: center;
  border: 3px solid transparent;
  border-bottom: 4px solid #212b32;
  border-top: 0;
}
.ribbon {
  flex: none;
  display: flex;
  align-self: flex-start;
  height: 101px;
  background: #3b4551;
}
.panel {
  display: flex;
  flex-direction: column;
  border-right: 1px solid #28313a;
}
.panel h2 {
  flex: 1;
  text-align: center;
  line-height: 20px;
}
.cols {
  display: flex;
  height: 81px;
  padding: 2px 0;
}
.col {
  display: flex;
  flex-direction: column;
  justify-content: space-between;
  padding: 1px 7px 1px 8px;
  border-left: 1px solid #28313a;
}
.col:first-child {
  border-left: 0;
  padding-left: 6px;
}
.col + .col {
  padding-left: 9px;
  padding-right: 9px;
}
.panel:first-child .col {
  padding-left: 8px;
}
.panel:first-child .col + .col {
  padding-left: 10px;
  padding-right: 4px;
}
.col button {
  display: flex;
  align-items: center;
  gap: 5px;
  height: 25px;
}
.col.wide button {
  gap: 3px;
}
.col.wide .ic {
  width: 35px;
  height: 22px;
}
.col.wide {
  padding-left: 8px;
  padding-bottom: 9px;
}
.col.wide button:first-child {
  height: 36px;
}
.col.wide button:first-child .ic {
  height: 36px;
}
.big {
  display: flex;
  flex-direction: column;
  align-items: center;
  gap: 3px;
  padding: 3px 4px 0;
  min-width: 60px;
}
.col + .big {
  border-left: 1px solid #28313a;
  min-width: 65px;
}
.big .ic {
  width: 35px;
  height: 33px;
  stroke-width: 1.3;
}
.big .caret::before {
  border-width: 4px 3px 0;
}

/* document tabs */
.doc-tabs {
  flex: none;
  display: flex;
  align-items: flex-end;
  height: 28px;
  padding-left: 17px;
  color: #b9bec3;
}
.doc-tabs button {
  display: flex;
  align-items: center;
  justify-content: space-between;
  width: 133px;
  height: 23px;
  padding: 0 17px 0 13px;
  background: #2d3640;
  clip-path: polygon(8% 0, 93% 0, 100% 100%, 0 100%);
}
.doc-tabs .active {
  padding-left: 10px;
  background: #3d4653;
  color: #eceeef;
}
.doc-tabs .plus {
  width: 26px;
  padding: 0 9px;
  font-weight: 700;
}

/* toolbars */
.toolbars {
  flex: none;
  padding-top: 3px;
  background: #3d4653;
}
.tb-row {
  display: flex;
  gap: 2px;
  height: 26px;
  margin-bottom: 2px;
}
.tb-row:last-child {
  margin-bottom: 3px;
}
.tb {
  display: flex;
  align-items: center;
  padding: 0 2px 0 6px;
  border: 1px solid #28313a;
  border-left: 0;
  background: linear-gradient(90deg, #8e959c 1px, transparent 1px 2px, #8e959c 2px 3px, transparent 3px) 2px 4px / 4px 17px no-repeat;
}
.tb button {
  width: 24px;
  height: 24px;
  display: flex;
  align-items: center;
  justify-content: center;
}
.tb .bar {
  width: 2px;
  height: 22px;
  margin: 0 2px;
  background: #f0f1f2;
}
.cn {
  font: italic 700 15px "Noto Sans CJK SC", sans-serif;
  color: #0a0a9c;
}
.cn .blk {
  color: #111;
}
.cn sub {
  color: #c22;
  font-size: 11px;
}
.combo {
  display: flex;
  align-items: center;
  height: 24px;
  width: 125px;
  padding-left: 5px;
  background: #c8c9c7;
}
.combo.mid {
  padding-left: 20px;
}
.combo.layer {
  width: 312px;
  gap: 3px;
  background: #d2d3d1;
}
.combo.color {
  width: 156px;
}
.combo.ltype {
  width: 168px;
}
.combo.lw {
  width: 130px;
}
.combo.pst {
  padding-left: 10px;
}
.combo .ln {
  width: 62px;
  margin-right: 5px;
  border-top: 1px solid #444;
}
.combo.lw .ln {
  width: 36px;
}
.swatch {
  width: 14px;
  height: 16px;
  margin-right: 3px;
  border: 1px solid #333;
  background: #fff;
}
.combo select,
.scale-bar select {
  appearance: none;
  flex: 1;
  min-width: 0;
  height: 100%;
  border: 0;
  border-radius: 0;
  padding: 0 12px 0 0;
  color: #75777a;
  font: 13px "Open Sans", "Noto Sans CJK SC", sans-serif;
  background: url("data:image/svg+xml,%3Csvg xmlns='http://www.w3.org/2000/svg' width='9' height='6'%3E%3Cpath d='M1 1l3.500 4L8 1' fill='none' stroke='%23888'/%3E%3C/svg%3E") right 4px center no-repeat;
}

/* work area */
.main {
  position: relative;
  flex: 1;
  min-height: 0;
  display: flex;
  background: #3d4653;
}
.left-main {
  flex: 1;
  min-width: 0;
  display: flex;
  flex-direction: column;
}
.work {
  flex: 1;
  min-height: 0;
  display: flex;
}
.vbar {
  flex: none;
  width: 29px;
  padding-right: 4px;
}
.vbar.right {
  width: 33px;
  padding: 0 3px;
}
.vgroup {
  display: flex;
  flex-direction: column;
  align-items: center;
  padding: 9px 2px 0 0;
  border: 1px solid #28313a;
  border-left: 0;
  background: repeating-linear-gradient(90deg, #8e959c 0 1px, transparent 1px 2px) 4px 3px / 14px 4px no-repeat;
}
.vbar.right .vgroup {
  border-left: 1px solid #28313a;
  padding-right: 0;
}
.vgroup button {
  display: flex;
  align-items: center;
  justify-content: center;
  width: 17px;
  height: 23px;
}
.vgroup.tiles button {
  height: 17px;
  margin: 3px 0;
  background: #b4dcf6;
  color: #1d2a36;
  font: 16px/17px "Noto Sans CJK SC", sans-serif;
}
.hbar {
  width: 20px;
  border-top: 2px solid #d8dbde;
  margin: 2px 0;
}
.center {
  flex: 1;
  min-width: 0;
  display: flex;
  flex-direction: column;
}
.ts-menu {
  flex: none;
  display: flex;
  align-items: center;
  height: 23px;
  padding-left: 19px;
  background: linear-gradient(90deg, #aaa 1px, #fff 1px 3px, #aaa 3px 4px, #fff 4px) 4px 0 no-repeat #fff;
  color: #222;
}
.ts-menu button {
  width: 56px;
  text-align: left;
}
.ts-menu .c1 {
  width: 53px;
}
.ts-menu .c3 {
  width: 60px;
}
.ts-menu .c4 {
  width: 64px;
}
.canvas {
  position: relative;
  flex: 1;
  min-height: 0;
  background: #000;
  overflow: hidden;
}
.drawing {
  display: block;
  width: 100%;
  height: 100%;
  fill: none;
}
.vp-label {
  position: absolute;
  left: 4px;
  top: 5px;
  font-size: 13px;
}
.pl {
  stroke: #b4b4b0;
  stroke-width: 1.4;
}
.pl.thin {
  stroke: #ddd;
  stroke-width: 1.2;
}
.ucs {
  fill: #ddd;
  font: 18px "Liberation Sans", sans-serif;
}
.frame1 {
  stroke: #22a022;
  stroke-width: 1.3;
}
.frame2 {
  stroke: #14e014;
  stroke-width: 2.4;
}
.bind {
  stroke: #2a3a78;
  stroke-width: 0.7;
}
.hd {
  stroke: #fff;
  stroke-width: 12;
}
.t {
  stroke: url(#pw);
  stroke-width: 12;
  stroke-dasharray: 61 2 37 2 86 4 44 2;
}
.t.g {
  stroke: url(#pg);
}
.t.m {
  stroke: url(#pm);
}
.t.r {
  stroke: #e02020;
}
.t.y {
  stroke: #d8d030;
}
.dt {
  fill: #fff;
  font: 700 32px "Noto Sans CJK SC", sans-serif;
}
.ul {
  stroke: #bbb;
  stroke-width: 3;
}
.cell {
  stroke: #34625a;
  stroke-width: 3;
}
.gl,
.gd {
  stroke: #16b016;
  stroke-width: 3;
}
.wl {
  stroke: #ddd;
  stroke-width: 4;
}
.dl {
  stroke: #ccc;
  stroke-width: 3;
}
.md {
  stroke: #c01cc0;
  stroke-width: 7;
}
.cube {
  fill: #8f8f8d;
  font: 700 18px "Noto Sans CJK SC", sans-serif;
}
.cube .top {
  fill: #3a3f46;
  font-size: 28px;
  font-weight: 400;
}
.wcs {
  fill: #52525c;
  font: 12px "Liberation Sans", sans-serif;
}

/* plot progress dialog */
.dialog {
  position: absolute;
  left: 726px;
  top: 150px;
  width: 486px;
  background: #eff0ef;
  color: #222;
}
.dialog h3 {
  height: 31px;
  padding-left: 8px;
  line-height: 31px;
  background: #fff;
}
.dlg-body {
  padding: 9px 27px 8px 22px;
  font-family: "Liberation Mono", "Noto Sans CJK SC", monospace;
}
.dlg-body p {
  font-size: 12px;
  line-height: 20px;
}
.dlg-body .in {
  padding-left: 4px;
}
.dlg-body .lab {
  padding-top: 3px;
}
.dlg-top {
  display: flex;
  justify-content: space-between;
  height: 39px;
}
.plotter {
  width: 34px;
  height: 34px;
  margin-top: 2px;
}
.progress {
  height: 22px;
  border: 1px solid #bcbdbc;
  background: #e4e5e3;
}
.dlg-btns {
  display: flex;
  justify-content: flex-end;
  gap: 10px;
  padding-top: 10px;
}
.dlg-btns button {
  width: 92px;
  height: 20px;
  border: 1px solid #adadad;
  background: #e1e2e1;
  font-size: 12px;
  line-height: 17px;
}
.dlg-btns .def {
  border: 2px solid #1a78c8;
}

/* scale bar under the canvas */
.scale-bar {
  flex: none;
  display: flex;
  justify-content: flex-end;
  height: 26px;
  border-bottom: 2px solid #fff;
  background: linear-gradient(90deg, #999 1px, #fff 1px 3px, #999 3px 4px, transparent 4px) 4px 0 no-repeat #eeefed;
  color: #222;
}
.sb-right {
  display: flex;
  align-items: center;
  gap: 3px;
  padding: 1px 2px 1px 3px;
  border-left: 1px solid #999;
}
.scale-bar select {
  flex: none;
  width: 54px;
  height: 20px;
  padding-left: 3px;
  border: 1px solid #aaa;
  background-color: #fff;
  color: #222;
  font-size: 12px;
}
.scale-bar .long {
  width: 101px;
  background-color: #e6e7e5;
}
.scale-bar button {
  height: 20px;
  padding: 0 2px;
  border: 1px solid #bbb;
  font-size: 12px;
}

/* command line */
.command {
  flex: none;
  display: flex;
  height: 62px;
  border-top: 3px solid #2c3641;
  color: #222;
  font-family: "Liberation Mono", "Noto Sans CJK SC", monospace;
}
.cmd-side {
  display: flex;
  flex-direction: column;
  align-items: center;
  gap: 6px;
  width: 25px;
  padding: 5px 4px 0 0;
  background: #333c48;
  color: #eceeef;
  line-height: 14px;
}
.cmd-side i {
  width: 18px;
  height: 5px;
  background: repeating-linear-gradient(90deg, #c9cdd1 0 2px, transparent 2px 3px);
}
.cmd-main {
  flex: 1;
  display: flex;
  flex-direction: column;
}
.history {
  height: 38px;
  padding: 1px 3px;
  border-bottom: 2px solid #848684;
  background: #c7c8c6;
}
.history p {
  line-height: 17px;
  white-space: pre;
}
.prompt {
  flex: 1;
  display: flex;
  align-items: center;
  padding-left: 4px;
  background: #fff;
}
.prompt svg {
  width: 17px;
  height: 13px;
}
.prompt .caret::before {
  border-top-color: #555;
}
.prompt input {
  flex: 1;
  border: 0;
  padding: 0 2px;
  background: none;
  font: 700 12px "Liberation Mono", "Noto Sans CJK SC", monospace;
  color: #222;
}

/* TSSD palette */
.tssd {
  flex: none;
  width: 108px;
  display: flex;
  flex-direction: column;
  padding: 0 5px;
  border-top: 3px solid #3d4653;
  background: #fff;
  color: #111;
  font: 16px "Liberation Mono", "Noto Sans CJK SC", monospace;
}
.grip {
  display: flex;
  align-items: center;
  gap: 4px;
  height: 17px;
}
.grip i {
  flex: 1;
  height: 5px;
  border: 1px solid #999;
  border-left: 0;
}
.grip button {
  width: 14px;
  font: 700 13px/12px "Liberation Sans", sans-serif;
}
.tssd header {
  padding: 2px 0;
  border-bottom: 2px solid #777;
  background: #ebecea;
  text-align: center;
  line-height: 18px;
  font-size: 14px;
}
.tssd-body {
  flex: 1;
  display: flex;
  background: #eeefed;
}
.tssd-icons {
  flex: none;
  width: 20px;
  height: 513px;
  margin-top: 3px;
  display: flex;
  flex-direction: column;
  justify-content: space-between;
}
.tssd-icons b {
  color: #a81c22;
  font: 700 15px/17px "Noto Sans CJK SC", sans-serif;
}
.tssd ul {
  flex: 1;
  padding: 1px 0 0 2px;
  border-left: 1px solid #777;
}
.tssd li {
  height: 19px;
  display: flex;
  align-items: center;
  justify-content: space-between;
  font-size: 16px;
  white-space: nowrap;
}
.tssd .sub::after {
  content: "";
  margin-right: 1px;
  border: 4px solid transparent;
  border-left: 4px solid #111;
  border-right: 0;
}
.tssd .sep {
  height: 1px;
  margin: 2px 0 2px -2px;
  background: #555;
}

/* vendor mark over the corner of the window */
.brand {
  position: absolute;
  right: 16px;
  bottom: 1px;
  display: flex;
  align-items: flex-end;
  gap: 2px;
}
.brand svg {
  width: 58px;
  height: 56px;
}
.brand div {
  display: flex;
  flex-direction: column;
}
.brand strong {
  color: #1c2f66;
  font: 700 34px/40px "Noto Sans CJK SC", sans-serif;
}
.brand em {
  height: 19px;
  background: #cf0a2c;
  color: #fff;
  text-align: center;
  font: 800 17px/18px "Open Sans", sans-serif;
}

/* status bar */
.status {
  flex: none;
  display: flex;
  justify-content: space-between;
  height: 31px;
  border-top: 2px solid #333d47;
}
.layouts {
  display: flex;
  padding-left: 10px;
  color: #b4bac0;
}
.layouts button {
  height: 18px;
  padding: 0 13px;
  background: #2c3640;
  clip-path: polygon(0 0, 100% 0, 92% 100%, 8% 100%);
  font-size: 12px;
  line-height: 17px;
}
.layouts .active {
  background: #3f4c58;
  color: #fff;
  font-weight: 700;
}
.st {
  display: flex;
  align-items: center;
  background: #343e49;
}
.st button {
  width: 26px;
  height: 26px;
  display: flex;
  align-items: center;
  justify-content: center;
}
.st .wide {
  width: 29px;
}
.st .scale,
.st .coord,
.st .txt,
.st .units {
  width: auto;
  padding: 0 6px;
  font-size: 12px;
  line-height: 26px;
  white-space: nowrap;
}
.st .units {
  gap: 6px;
  width: 84px;
  justify-content: flex-start;
}
.st .coord {
  padding: 0 8px;
  border-left: 1px solid #28313a;
  border-right: 1px solid #28313a;
}
.st .on {
  background: #5088c0;
  border: 1px solid #343e49;
}
```
